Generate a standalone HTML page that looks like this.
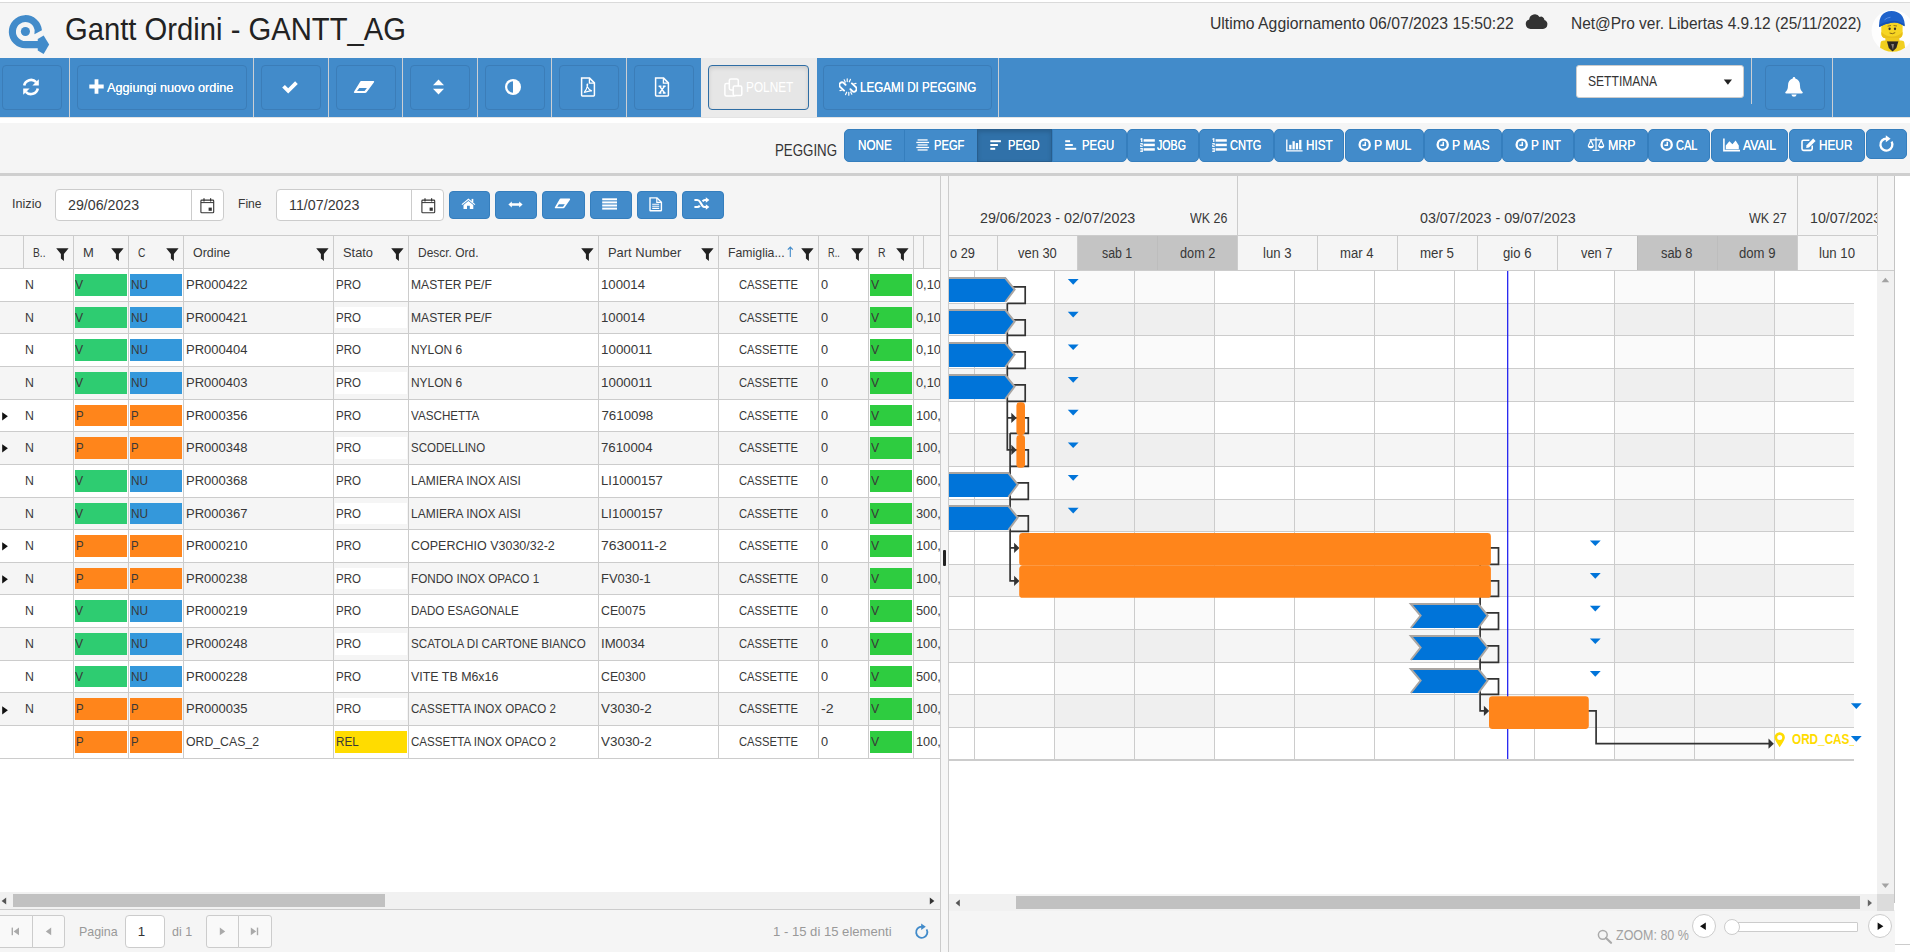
<!DOCTYPE html>
<html><head><meta charset="utf-8"><title>Gantt Ordini - GANTT_AG</title>
<style>
html,body{margin:0;padding:0;}
body{width:1910px;height:952px;overflow:hidden;background:#f5f5f5;font-family:"Liberation Sans",sans-serif;position:relative;}
.r{position:absolute;box-sizing:border-box;}
.t{position:absolute;white-space:nowrap;line-height:1;transform-origin:0 0;display:block;}
</style></head><body>
<div class="r" style="left:0px;top:0px;width:1910px;height:58px;background:#f5f5f5;"></div>
<div class="r" style="left:0px;top:0px;width:1910px;height:2px;background:#fff;"></div>
<div class="r" style="left:0px;top:2px;width:1910px;height:1px;background:#dadada;"></div>
<svg class="r" style="left:6px;top:12px;" width="48" height="46" viewBox="0 0 48 46">
<path d="M35.95 18.28 A16.6 16.6 0 1 0 19.4 36.3 L33 36.3 L33 29.1 L19.4 29.02 A9.44 9.44 0 1 1 28.44 22.29 Z" fill="#428bca"/>
<circle cx="19.4" cy="19.55" r="4.55" fill="#428bca"/>
<path d="M31.77 27.07 L37.63 23.49 L43.16 32.6 L37.63 42.05 L31.77 38.47 Z" fill="#428bca"/>
</svg>
<span class="t" style="left:65.00px;top:13.00px;font-size:32px;color:#222;transform:scaleX(0.9132);">Gantt Ordini - GANTT_AG</span>
<span class="t" style="left:1209.50px;top:16.00px;font-size:16.67px;color:#333;transform:scaleX(0.9453);">Ultimo Aggiornamento 06/07/2023 15:50:22</span>
<svg class="r" style="left:1525px;top:12px;" width="24" height="19" viewBox="0 0 24 19"><path d="M5.7 16.9 A4.8 4.8 0 0 1 4.2 7.5 A5.6 5.6 0 0 1 14.6 5.0 A3.3 3.3 0 0 1 19.4 8.0 A4.6 4.6 0 0 1 18 16.9 Z" fill="#333"/></svg>
<span class="t" style="left:1571.20px;top:16.00px;font-size:16.67px;color:#333;transform:scaleX(0.9283);">Net@Pro ver. Libertas 4.9.12 (25/11/2022)</span>
<svg class="r" style="left:1870px;top:8px;" width="40" height="46" viewBox="0 0 40 46">
<defs><clipPath id="avc"><circle cx="22.6" cy="22.8" r="21"/></clipPath></defs>
<circle cx="22.6" cy="22.8" r="21" fill="#fefefe"/>
<g clip-path="url(#avc)">
<path d="M9.6 44 L10.6 35 Q11 32.6 14 32.6 L31 32.6 Q34 32.6 34.4 35 L35.6 44 Z" fill="#f1cf1f"/>
<path d="M16.7 32.6 L28.6 32.6 L26.4 40 L22.6 43.6 L18.8 40 Z" fill="#2a2622"/>
<path d="M21.2 36 L24 36 L23 42 Z" fill="#8a8178"/>
<rect x="15.4" y="28" width="14" height="5.4" fill="#efc91c"/>
<rect x="11.3" y="13" width="21.3" height="17.2" rx="4.2" fill="#f6d523"/>
<path d="M11.3 24 Q11.3 30.2 15.5 30.2 L28.4 30.2 Q32.6 30.2 32.6 24 Q28 28.6 22 28.6 Q16 28.6 11.3 24 Z" fill="#e9c019"/>
<ellipse cx="19.6" cy="20.8" rx="1.15" ry="1.4" fill="#3b3330"/><ellipse cx="25" cy="20.8" rx="1.15" ry="1.4" fill="#3b3330"/>
<path d="M17.6 18.2 L21 17.5 M23.6 17.5 L27 18" stroke="#6b4a1a" stroke-width="0.7" fill="none"/>
<path d="M19.6 25 Q22.4 26.6 25.2 24.6" stroke="#7a5a14" stroke-width="0.9" fill="none"/>
<path d="M9.2 18.9 Q8.2 3.6 21.6 3.1 Q33.2 3.4 34.7 15.8 L34.5 18.3 Q28.5 13.6 21.6 14.7 Q15 15.8 9.2 18.9 Z" fill="#1f63cb"/>
<path d="M9.2 18.9 Q15 15.8 21.6 14.7 Q28.5 13.6 34.5 18.3 L34.6 16.6 Q28 11.8 21 13 Q14 14.2 9.1 16.8 Z" fill="#1852b4"/>
<path d="M14.5 11.8 Q17 9.6 20.5 9.2" stroke="#5b93e6" stroke-width="0.9" fill="none"/>
</g>
</svg>
<div class="r" style="left:0px;top:58px;width:1910px;height:59px;background:#428bca;"></div>
<div class="r" style="left:0px;top:117px;width:1910px;height:6px;background:#fff;"></div>
<div class="r" style="left:0px;top:117px;width:1910px;height:1px;background:#e4e4e4;"></div>
<div class="r" style="left:69px;top:58px;width:1px;height:59px;background:#cbcfd4;"></div>
<div class="r" style="left:253px;top:58px;width:1px;height:59px;background:#cbcfd4;"></div>
<div class="r" style="left:328px;top:58px;width:1px;height:59px;background:#cbcfd4;"></div>
<div class="r" style="left:402px;top:58px;width:1px;height:59px;background:#cbcfd4;"></div>
<div class="r" style="left:477px;top:58px;width:1px;height:59px;background:#cbcfd4;"></div>
<div class="r" style="left:551px;top:58px;width:1px;height:59px;background:#cbcfd4;"></div>
<div class="r" style="left:626px;top:58px;width:1px;height:59px;background:#cbcfd4;"></div>
<div class="r" style="left:998px;top:58px;width:1px;height:59px;background:#cbcfd4;"></div>
<div class="r" style="left:1832px;top:58px;width:1px;height:59px;background:#cbcfd4;"></div>
<div class="r" style="left:1751px;top:58px;width:1px;height:46px;background:#cbcfd4;"></div>
<div class="r" style="left:2px;top:65px;width:60px;height:45px;border:1px solid #3b7db8;border-radius:4px;"></div>
<div class="r" style="left:261px;top:65px;width:60px;height:45px;border:1px solid #3b7db8;border-radius:4px;"></div>
<div class="r" style="left:335.5px;top:65px;width:60px;height:45px;border:1px solid #3b7db8;border-radius:4px;"></div>
<div class="r" style="left:410px;top:65px;width:60px;height:45px;border:1px solid #3b7db8;border-radius:4px;"></div>
<div class="r" style="left:484.5px;top:65px;width:60px;height:45px;border:1px solid #3b7db8;border-radius:4px;"></div>
<div class="r" style="left:559px;top:65px;width:60px;height:45px;border:1px solid #3b7db8;border-radius:4px;"></div>
<div class="r" style="left:633.5px;top:65px;width:60px;height:45px;border:1px solid #3b7db8;border-radius:4px;"></div>
<div class="r" style="left:76.5px;top:65px;width:170px;height:45px;border:1px solid #3b7db8;border-radius:4px;"></div>
<div class="r" style="left:823px;top:65px;width:169px;height:45px;border:1px solid #3b7db8;border-radius:4px;"></div>
<div class="r" style="left:1765px;top:65px;width:59.5px;height:45px;border:1px solid #3b7db8;border-radius:4px;"></div>
<div class="r" style="left:701px;top:58px;width:116px;height:59px;background:#ebebeb;"></div>
<div class="r" style="left:708px;top:65px;width:100.5px;height:45px;background:#e6e6e6;border:1px solid #2e6da4;border-radius:4px;box-shadow:inset 0 2px 4px rgba(0,0,0,.12);"></div>
<svg class="r" style="left:21px;top:77px;" width="20" height="20" viewBox="0 0 20 20">
<g fill="none" stroke="#fff" stroke-width="2.6">
<path d="M3.2 8.6 A7 7 0 0 1 15.2 5.2"/>
<path d="M16.8 11.4 A7 7 0 0 1 4.8 14.8"/>
</g>
<path d="M17.8 2.2 L17.8 8.6 L11.4 8.6 Z" fill="#fff"/>
<path d="M2.2 17.8 L2.2 11.4 L8.6 11.4 Z" fill="#fff"/>
</svg>
<svg class="r" style="left:89px;top:79px;" width="15" height="15" viewBox="0 0 15 15"><path d="M5.6 0.3 H9.4 V5.6 H14.7 V9.4 H9.4 V14.7 H5.6 V9.4 H0.3 V5.6 H5.6 Z" fill="#fff"/></svg>
<span class="t" style="left:107.00px;top:81.00px;font-size:13.6px;color:#fff;transform:scaleX(0.9338);text-shadow:0 0 0.6px #fff;">Aggiungi nuovo ordine</span>
<svg class="r" style="left:281px;top:79px;" width="18" height="16" viewBox="0 0 18 16"><path d="M1.2 8.6 L3.9 5.9 L7.2 9.2 L14.1 2.3 L16.8 5.0 L7.2 14.6 Z" fill="#fff"/></svg>
<svg class="r" style="left:353px;top:80px;" width="22" height="14" viewBox="0 0 22 14"><path d="M8.2 1 L20.6 1 Q21.6 1.2 21 2.2 L13.6 12.2 Q13.1 13 12 13 L1.6 13 Q0.4 12.8 1 11.8 L7 2 Q7.5 1 8.2 1 Z M6.3 7.9 L4 11.1 L11.6 11.1 L13.9 7.9 Z" fill="#fff" fill-rule="evenodd"/></svg>
<svg class="r" style="left:432px;top:79px;" width="13" height="16" viewBox="0 0 13 16"><path d="M6.5 0.6 L12 6.3 L1 6.3 Z M6.5 15.4 L12 9.7 L1 9.7 Z" fill="#fff"/></svg>
<svg class="r" style="left:504px;top:78px;" width="18" height="18" viewBox="0 0 18 18"><circle cx="9" cy="9" r="8" fill="#fff"/><path d="M9 3.2 A5.8 5.8 0 0 0 9 14.8 Z" fill="#428bca"/></svg>
<svg class="r" style="left:580px;top:77px;" width="16" height="20" viewBox="0 0 16 20"><path d="M1.6 1.1 H9.6 L14.4 5.9 V18.2 Q14.4 18.9 13.7 18.9 H2.3 Q1.6 18.9 1.6 18.2 Z" fill="none" stroke="#fff" stroke-width="1.5"/>
<path d="M9.4 1.3 V6.1 H14.2" fill="none" stroke="#fff" stroke-width="1.3"/>
<path d="M4 15.6 Q6.6 13.2 7.6 8.2 Q7.9 6.8 7.2 7 Q6.5 7.4 7.4 9.8 Q8.6 12.8 12 14 Q10 13.3 4 15.6" fill="none" stroke="#fff" stroke-width="1.1"/></svg>
<svg class="r" style="left:654px;top:77px;" width="16" height="20" viewBox="0 0 16 20"><path d="M1.6 1.1 H9.6 L14.4 5.9 V18.2 Q14.4 18.9 13.7 18.9 H2.3 Q1.6 18.9 1.6 18.2 Z" fill="none" stroke="#fff" stroke-width="1.5"/>
<path d="M9.4 1.3 V6.1 H14.2" fill="none" stroke="#fff" stroke-width="1.3"/>
<path d="M4.6 9.2 H7.4 M8.8 9.2 H11.6 M4.6 16 H7.4 M8.8 16 H11.6 M5.6 9.2 L10.6 16 M10.6 9.2 L5.6 16" stroke="#fff" stroke-width="1.4" fill="none"/></svg>
<svg class="r" style="left:724px;top:78px;" width="19" height="19" viewBox="0 0 19 19"><rect x="5.3" y="0.9" width="9" height="11" rx="1.6" fill="none" stroke="#fff" stroke-width="1.5"/>
<path d="M5 5.6 H2.4 Q0.9 5.6 0.9 7.1 V16.4 Q0.9 17.9 2.4 17.9 H10.2 Q11.7 17.9 11.7 16.4 V12.2" fill="none" stroke="#fff" stroke-width="1.5"/>
<rect x="9.2" y="8" width="8.6" height="9.6" rx="1.4" fill="#e6e6e6" stroke="#fff" stroke-width="1.5"/></svg>
<span class="t" style="left:746.00px;top:80.00px;font-size:14.5px;color:#fff;transform:scaleX(0.8153);">POLNET</span>
<svg class="r" style="left:839px;top:78px;" width="18" height="18" viewBox="0 0 18 18"><g fill="none" stroke="#fff" stroke-width="1.9" stroke-linecap="round">
<path d="M6.6 6.8 L4.6 4.8 A2.7 2.7 0 0 0 0.9 8.6 L5.1 12.6"/>
<path d="M11.4 11.2 L13.4 13.2 A2.7 2.7 0 0 0 17.1 9.4 L12.9 5.4"/>
</g>
<g stroke="#fff" stroke-width="1.2" stroke-linecap="round">
<path d="M8.2 0.8 V3.6 M5.2 1.8 L6.3 4 M11.4 1.4 L10.3 3.8 M9.8 17.2 V14.4 M12.8 16.2 L11.7 14 M6.6 16.6 L7.7 14.2 M1 12.6 L3.2 12 M17 5.4 L14.8 6"/></g></svg>
<span class="t" style="left:859.50px;top:80.00px;font-size:14.5px;color:#fff;transform:scaleX(0.8019);text-shadow:0 0 0.5px #fff;">LEGAMI DI PEGGING</span>
<div class="r" style="left:1576px;top:65px;width:168px;height:33px;background:#fff;border:1px solid #ccc;border-radius:3px;"></div>
<span class="t" style="left:1587.80px;top:74.00px;font-size:14.4px;color:#333;transform:scaleX(0.8397);">SETTIMANA</span>
<svg class="r" style="left:1723px;top:79px;" width="10" height="7" viewBox="0 0 10 7"><path d="M0.8 0.4 H9 L4.9 5.8 Z" fill="#222"/></svg>
<svg class="r" style="left:1784px;top:76px;" width="20" height="22" viewBox="0 0 20 22"><path d="M10 1 Q11.3 1 11.3 2.4 Q16 3.6 16 9.6 Q16 14.2 18.8 16.2 Q18.8 17.4 17.6 17.4 H2.4 Q1.2 17.4 1.2 16.2 Q4 14.2 4 9.6 Q4 3.6 8.7 2.4 Q8.7 1 10 1 Z" fill="#fff"/>
<path d="M7.4 18.4 H12.6 Q12.2 20.8 10 20.8 Q7.8 20.8 7.4 18.4 Z" fill="#fff"/></svg>
<span class="t" style="left:774.60px;top:142.00px;font-size:16.5px;color:#333;transform:scaleX(0.8051);">PEGGING</span>
<div class="r" style="left:844px;top:129px;width:283px;height:33px;background:#428bca;border:1px solid #357ebd;border-radius:5px;"></div>
<div class="r" style="left:904px;top:129px;width:1px;height:33px;background:#357ebd;"></div>
<div class="r" style="left:1051.5px;top:129px;width:1px;height:33px;background:#357ebd;"></div>
<div class="r" style="left:977px;top:129px;width:75px;height:33px;background:#3071a9;border:1px solid #285e8e;box-shadow:inset 0 2px 4px rgba(0,0,0,.15);"></div>
<div class="r" style="left:1127px;top:129px;width:72px;height:33px;background:#428bca;border:1px solid #357ebd;border-radius:5px;"></div>
<div class="r" style="left:1199px;top:129px;width:75px;height:33px;background:#428bca;border:1px solid #357ebd;border-radius:5px;"></div>
<div class="r" style="left:1274px;top:129px;width:70px;height:33px;background:#428bca;border:1px solid #357ebd;border-radius:5px;"></div>
<div class="r" style="left:1345px;top:129px;width:79px;height:33px;background:#428bca;border:1px solid #357ebd;border-radius:5px;"></div>
<div class="r" style="left:1424px;top:129px;width:78px;height:33px;background:#428bca;border:1px solid #357ebd;border-radius:5px;"></div>
<div class="r" style="left:1502px;top:129px;width:72px;height:33px;background:#428bca;border:1px solid #357ebd;border-radius:5px;"></div>
<div class="r" style="left:1574px;top:129px;width:74px;height:33px;background:#428bca;border:1px solid #357ebd;border-radius:5px;"></div>
<div class="r" style="left:1648px;top:129px;width:62px;height:33px;background:#428bca;border:1px solid #357ebd;border-radius:5px;"></div>
<div class="r" style="left:1711px;top:129px;width:77px;height:33px;background:#428bca;border:1px solid #357ebd;border-radius:5px;"></div>
<div class="r" style="left:1789px;top:129px;width:76px;height:33px;background:#428bca;border:1px solid #357ebd;border-radius:5px;"></div>
<div class="r" style="left:1866px;top:129px;width:41px;height:30px;background:#428bca;border:1px solid #357ebd;border-radius:5px;"></div>
<span class="t" style="left:857.50px;top:138.00px;font-size:14.5px;color:#fff;transform:scaleX(0.8044);text-shadow:0 0 0.5px #fff;">NONE</span>
<span class="t" style="left:934.40px;top:138.00px;font-size:14.5px;color:#fff;transform:scaleX(0.7700);text-shadow:0 0 0.5px #fff;">PEGF</span>
<span class="t" style="left:1007.50px;top:138.00px;font-size:14.5px;color:#fff;transform:scaleX(0.7665);text-shadow:0 0 0.5px #fff;">PEGD</span>
<span class="t" style="left:1081.70px;top:138.00px;font-size:14.5px;color:#fff;transform:scaleX(0.7836);text-shadow:0 0 0.5px #fff;">PEGU</span>
<span class="t" style="left:1157.10px;top:138.00px;font-size:14.5px;color:#fff;transform:scaleX(0.7320);text-shadow:0 0 0.5px #fff;">JOBG</span>
<span class="t" style="left:1229.50px;top:138.00px;font-size:14.5px;color:#fff;transform:scaleX(0.7644);text-shadow:0 0 0.5px #fff;">CNTG</span>
<span class="t" style="left:1305.60px;top:138.00px;font-size:14.5px;color:#fff;transform:scaleX(0.8053);text-shadow:0 0 0.5px #fff;">HIST</span>
<span class="t" style="left:1373.50px;top:138.00px;font-size:14.5px;color:#fff;transform:scaleX(0.8444);text-shadow:0 0 0.5px #fff;">P MUL</span>
<span class="t" style="left:1451.90px;top:138.00px;font-size:14.5px;color:#fff;transform:scaleX(0.8404);text-shadow:0 0 0.5px #fff;">P MAS</span>
<span class="t" style="left:1530.50px;top:138.00px;font-size:14.5px;color:#fff;transform:scaleX(0.8126);text-shadow:0 0 0.5px #fff;">P INT</span>
<span class="t" style="left:1607.70px;top:138.00px;font-size:14.5px;color:#fff;transform:scaleX(0.8565);text-shadow:0 0 0.5px #fff;">MRP</span>
<span class="t" style="left:1676.30px;top:138.00px;font-size:14.5px;color:#fff;transform:scaleX(0.7586);text-shadow:0 0 0.5px #fff;">CAL</span>
<span class="t" style="left:1742.60px;top:138.00px;font-size:14.5px;color:#fff;transform:scaleX(0.8471);text-shadow:0 0 0.5px #fff;">AVAIL</span>
<span class="t" style="left:1818.80px;top:138.00px;font-size:14.5px;color:#fff;transform:scaleX(0.8129);text-shadow:0 0 0.5px #fff;">HEUR</span>
<svg class="r" style="left:916px;top:138.8px;" width="16" height="14" viewBox="0 0 16 14"><rect x="1.6" y="0.3" width="10" height="1.3" fill="#fff"/><rect x="0.3" y="2.8" width="12.8" height="1.3" fill="#fff"/><rect x="1.6" y="5.3" width="10" height="1.3" fill="#fff"/><rect x="0.3" y="7.8" width="12.8" height="1.3" fill="#fff"/><rect x="1.6" y="10.3" width="10" height="1.3" fill="#fff"/></svg>
<svg class="r" style="left:990px;top:139px;" width="16" height="14" viewBox="0 0 16 14"><rect x="0.3" y="1.2" width="10.6" height="2" fill="#fff"/><rect x="0.3" y="5.0" width="7.6" height="2" fill="#fff"/><rect x="0.3" y="8.8" width="4.9" height="2" fill="#fff"/></svg>
<svg class="r" style="left:1064.5px;top:139px;" width="16" height="14" viewBox="0 0 16 14"><rect x="0.2" y="1.2" width="4.9" height="2" fill="#fff"/><rect x="0.2" y="5.0" width="7.6" height="2" fill="#fff"/><rect x="0.2" y="8.8" width="11" height="2" fill="#fff"/></svg>
<svg class="r" style="left:1139.8px;top:138px;" width="16" height="15" viewBox="0 0 16 15"><g fill="#fff"><rect x="3.6" y="1.2" width="11.2" height="2.5"/><rect x="3.6" y="5.7" width="11.2" height="2.5"/><rect x="3.6" y="10.2" width="11.2" height="2.5"/>
<rect x="1.1" y="0.2" width="1.3" height="3.8"/><rect x="0.3" y="0.6" width="1.4" height="1"/>
<rect x="0.2" y="5.1" width="2.5" height="1"/><rect x="1.6" y="5.7" width="1.1" height="1.6"/><rect x="0.2" y="6.7" width="1.1" height="1.4"/><rect x="0.2" y="7.9" width="2.5" height="1"/>
<rect x="0.2" y="10" width="2.5" height="0.9"/><rect x="1.7" y="10.2" width="1" height="3.7"/><rect x="0.2" y="11.6" width="2.5" height="0.8"/><rect x="0.2" y="13.1" width="2.5" height="0.9"/></g></svg>
<svg class="r" style="left:1211.9px;top:138px;" width="16" height="15" viewBox="0 0 16 15"><g fill="#fff"><rect x="3.6" y="1.2" width="11.2" height="2.5"/><rect x="3.6" y="5.7" width="11.2" height="2.5"/><rect x="3.6" y="10.2" width="11.2" height="2.5"/>
<rect x="1.1" y="0.2" width="1.3" height="3.8"/><rect x="0.3" y="0.6" width="1.4" height="1"/>
<rect x="0.2" y="5.1" width="2.5" height="1"/><rect x="1.6" y="5.7" width="1.1" height="1.6"/><rect x="0.2" y="6.7" width="1.1" height="1.4"/><rect x="0.2" y="7.9" width="2.5" height="1"/>
<rect x="0.2" y="10" width="2.5" height="0.9"/><rect x="1.7" y="10.2" width="1" height="3.7"/><rect x="0.2" y="11.6" width="2.5" height="0.8"/><rect x="0.2" y="13.1" width="2.5" height="0.9"/></g></svg>
<svg class="r" style="left:1286px;top:138.6px;" width="17" height="14" viewBox="0 0 17 14"><path d="M0.8 0.4 V11.8 H16.6" fill="none" stroke="#fff" stroke-width="1.3"/><g fill="#fff"><rect x="3.2" y="5.8" width="2.3" height="4.6"/><rect x="6.5" y="2.2" width="2.3" height="8.2"/><rect x="9.8" y="4" width="2.3" height="6.4"/><rect x="13.1" y="0.9" width="2.3" height="9.5"/></g></svg>
<svg class="r" style="left:1357.5px;top:138.2px;" width="13.4" height="13.4" viewBox="0 0 13.4 13.4"><circle cx="6.7" cy="6.7" r="5.1" fill="none" stroke="#fff" stroke-width="2.3"/><path d="M7.3 3.7 V7.3 H4.4" fill="none" stroke="#fff" stroke-width="1.5"/></svg>
<svg class="r" style="left:1436.2px;top:138.2px;" width="13.4" height="13.4" viewBox="0 0 13.4 13.4"><circle cx="6.7" cy="6.7" r="5.1" fill="none" stroke="#fff" stroke-width="2.3"/><path d="M7.3 3.7 V7.3 H4.4" fill="none" stroke="#fff" stroke-width="1.5"/></svg>
<svg class="r" style="left:1514.6px;top:138.2px;" width="13.4" height="13.4" viewBox="0 0 13.4 13.4"><circle cx="6.7" cy="6.7" r="5.1" fill="none" stroke="#fff" stroke-width="2.3"/><path d="M7.3 3.7 V7.3 H4.4" fill="none" stroke="#fff" stroke-width="1.5"/></svg>
<svg class="r" style="left:1660.3px;top:138.2px;" width="13.4" height="13.4" viewBox="0 0 13.4 13.4"><circle cx="6.7" cy="6.7" r="5.1" fill="none" stroke="#fff" stroke-width="2.3"/><path d="M7.3 3.7 V7.3 H4.4" fill="none" stroke="#fff" stroke-width="1.5"/></svg>
<svg class="r" style="left:1586.5px;top:137.4px;" width="18" height="15" viewBox="0 0 18 15"><g fill="none" stroke="#fff" stroke-width="1.2"><path d="M9 0.6 V12.6 M2.6 2.8 H15.4 M5.6 13.3 H12.4"/>
<path d="M3.8 3.2 L1.2 9 M3.8 3.2 L6.4 9 M14.2 3.2 L11.6 9 M14.2 3.2 L16.8 9"/></g>
<path d="M0.6 9 H7 Q6.6 11.4 3.8 11.4 Q1 11.4 0.6 9 Z M11 9 H17.4 Q17 11.4 14.2 11.4 Q11.4 11.4 11 9 Z" fill="#fff"/></svg>
<svg class="r" style="left:1723px;top:138px;" width="18" height="14" viewBox="0 0 18 14"><path d="M0.9 0.4 V12.6 H17" fill="none" stroke="#fff" stroke-width="1.6"/><path d="M2.8 11.2 V7.6 L6.4 3.2 L9.4 6.2 L12.6 2.6 L15.8 7.4 V11.2 Z" fill="#fff"/></svg>
<svg class="r" style="left:1800.8px;top:137.4px;" width="16" height="15" viewBox="0 0 16 15"><path d="M11.2 8.4 V11.8 Q11.2 13.4 9.6 13.4 H2.6 Q1 13.4 1 11.8 V4.8 Q1 3.2 2.6 3.2 H8.4" fill="none" stroke="#fff" stroke-width="1.6"/>
<path d="M5.6 8.2 L12.2 1.6 L14.6 4 L8 10.6 L5.2 11 Z" fill="#fff"/></svg>
<svg class="r" style="left:1878px;top:135px;" width="17" height="18" viewBox="0 0 17 18"><path d="M13.6 6.6 A6 6 0 1 1 8.6 3.6" fill="none" stroke="#fff" stroke-width="2.3"/><path d="M7.8 0.2 L12.6 3.7 L7.8 7.2 Z" fill="#fff"/></svg>
<div class="r" style="left:0px;top:173px;width:1910px;height:3px;background:#cfcfcf;"></div>
<div class="r" style="left:0px;top:176px;width:941px;height:776px;background:#f5f5f5;"></div>
<div class="r" style="left:940px;top:176px;width:1px;height:776px;background:#cccccc;"></div>
<div class="r" style="left:941px;top:176px;width:7px;height:776px;background:#f6f6f6;"></div>
<div class="r" style="left:943px;top:550px;width:3px;height:16px;background:#222;border-radius:1px;"></div>
<span class="t" style="left:12.00px;top:197.00px;font-size:13.6px;color:#383838;transform:scaleX(0.9291);">Inizio</span>
<div class="r" style="left:55px;top:189px;width:168.5px;height:32px;background:#fff;border:1px solid #ccc;border-radius:4px;"></div>
<div class="r" style="left:191px;top:190px;width:1px;height:30px;background:#ccc;"></div>
<span class="t" style="left:67.90px;top:198.00px;font-size:14px;color:#383838;transform:scaleX(1.0147);">29/06/2023</span>
<span class="t" style="left:238.30px;top:197.00px;font-size:13.6px;color:#383838;transform:scaleX(0.8920);">Fine</span>
<div class="r" style="left:276px;top:189px;width:168px;height:32px;background:#fff;border:1px solid #ccc;border-radius:4px;"></div>
<div class="r" style="left:411px;top:190px;width:1px;height:30px;background:#ccc;"></div>
<span class="t" style="left:289.00px;top:198.00px;font-size:14px;color:#383838;transform:scaleX(1.0198);">11/07/2023</span>
<svg class="r" style="left:200px;top:197.6px;" width="15" height="16" viewBox="0 0 15 16"><rect x="0.9" y="2.1" width="12.8" height="12.6" rx="0.8" fill="#fff" stroke="#333" stroke-width="1.1"/>
<path d="M0.9 4.6 H13.7" stroke="#333" stroke-width="1"/><path d="M4 0.2 V3.4 M10.6 0.2 V3.4" stroke="#333" stroke-width="1.2"/>
<rect x="8.6" y="9.6" width="3.2" height="3.2" fill="#333"/></svg>
<svg class="r" style="left:420.5px;top:197.6px;" width="15" height="16" viewBox="0 0 15 16"><rect x="0.9" y="2.1" width="12.8" height="12.6" rx="0.8" fill="#fff" stroke="#333" stroke-width="1.1"/>
<path d="M0.9 4.6 H13.7" stroke="#333" stroke-width="1"/><path d="M4 0.2 V3.4 M10.6 0.2 V3.4" stroke="#333" stroke-width="1.2"/>
<rect x="8.6" y="9.6" width="3.2" height="3.2" fill="#333"/></svg>
<div class="r" style="left:449px;top:191px;width:41px;height:28px;background:#428bca;border:1px solid #357ebd;border-radius:4px;"></div>
<div class="r" style="left:495px;top:191px;width:42px;height:28px;background:#428bca;border:1px solid #357ebd;border-radius:4px;"></div>
<div class="r" style="left:542px;top:191px;width:43px;height:28px;background:#428bca;border:1px solid #357ebd;border-radius:4px;"></div>
<div class="r" style="left:590px;top:191px;width:42px;height:28px;background:#428bca;border:1px solid #357ebd;border-radius:4px;"></div>
<div class="r" style="left:637px;top:191px;width:40px;height:28px;background:#428bca;border:1px solid #357ebd;border-radius:4px;"></div>
<div class="r" style="left:682px;top:191px;width:42px;height:28px;background:#428bca;border:1px solid #357ebd;border-radius:4px;"></div>
<svg class="r" style="left:461px;top:198px;" width="15" height="12" viewBox="0 0 15 12"><path d="M7.4 0.5 L14.3 6.2 L13.5 7.1 L7.4 2.1 L1.3 7.1 L0.5 6.2 Z" fill="#fff"/><path d="M7.4 3 L12.3 7 V10.9 H8.8 V7.8 H6 V10.9 H2.5 V7 Z" fill="#fff"/><rect x="10.6" y="0.9" width="1.7" height="3.4" fill="#fff"/></svg>
<svg class="r" style="left:507.5px;top:200.5px;" width="16" height="8" viewBox="0 0 16 8"><path d="M0.4 3.5 L3.8 0.5 V2.3 H11.2 V0.5 L14.6 3.5 L11.2 6.5 V4.7 H3.8 V6.5 Z" fill="#fff"/></svg>
<svg class="r" style="left:554px;top:198.2px;" width="17" height="11" viewBox="0 0 17 11"><path d="M6.6 0.6 L15.6 0.6 Q16.5 0.8 16 1.7 L10.6 9.6 Q10.2 10.3 9.4 10.3 L1.4 10.3 Q0.4 10.1 0.9 9.2 L5.6 1.3 Q6 0.6 6.6 0.6 Z M4.9 6.2 L3.2 8.8 L9 8.8 L10.8 6.2 Z" fill="#fff" fill-rule="evenodd"/></svg>
<svg class="r" style="left:602px;top:197.5px;" width="16" height="12" viewBox="0 0 16 12"><rect x="0.2" y="0.3" width="14.8" height="2" fill="#fff"/><rect x="0.2" y="3.4" width="14.8" height="2" fill="#fff"/><rect x="0.2" y="6.5" width="14.8" height="2" fill="#fff"/><rect x="0.2" y="9.6" width="14.8" height="2" fill="#fff"/></svg>
<svg class="r" style="left:648.8px;top:197px;" width="14" height="15" viewBox="0 0 14 15"><path d="M1 0.9 H8 L12.4 5.2 V13.2 Q12.4 13.8 11.8 13.8 H1.6 Q1 13.8 1 13.2 Z" fill="none" stroke="#fff" stroke-width="1.4"/><path d="M7.8 1 V5.4 H12.2" fill="none" stroke="#fff" stroke-width="1.2"/>
<path d="M3.2 7.2 H10.2 M3.2 9.3 H10.2 M3.2 11.4 H10.2" stroke="#fff" stroke-width="1.1"/></svg>
<svg class="r" style="left:693.6px;top:197px;" width="16" height="13" viewBox="0 0 16 13"><g fill="none" stroke="#fff" stroke-width="2.1"><path d="M0.4 3 H3.2 Q5 3 6.1 5 L8.3 8.6 Q9.3 10 11 10 H12.4"/><path d="M0.4 10 H3.2 Q4.9 10 5.8 8.6 M8.6 4.4 Q9.5 3 11 3 H12.4"/></g>
<path d="M11.8 0.2 L15.4 3 L11.8 5.8 Z M11.8 7.2 L15.4 10 L11.8 12.8 Z" fill="#fff"/></svg>
<div class="r" style="left:0px;top:235px;width:940px;height:1px;background:#cccccc;"></div>
<div class="r" style="left:0px;top:268px;width:940px;height:1px;background:#cccccc;"></div>
<div class="r" style="left:23px;top:236px;width:1px;height:32px;background:#cccccc;"></div>
<div class="r" style="left:73px;top:236px;width:1px;height:32px;background:#cccccc;"></div>
<div class="r" style="left:128px;top:236px;width:1px;height:32px;background:#cccccc;"></div>
<div class="r" style="left:183px;top:236px;width:1px;height:32px;background:#cccccc;"></div>
<div class="r" style="left:333px;top:236px;width:1px;height:32px;background:#cccccc;"></div>
<div class="r" style="left:408px;top:236px;width:1px;height:32px;background:#cccccc;"></div>
<div class="r" style="left:598px;top:236px;width:1px;height:32px;background:#cccccc;"></div>
<div class="r" style="left:718px;top:236px;width:1px;height:32px;background:#cccccc;"></div>
<div class="r" style="left:818px;top:236px;width:1px;height:32px;background:#cccccc;"></div>
<div class="r" style="left:868px;top:236px;width:1px;height:32px;background:#cccccc;"></div>
<div class="r" style="left:913px;top:236px;width:1px;height:32px;background:#cccccc;"></div>
<div class="r" style="left:923px;top:236px;width:1px;height:32px;background:#cccccc;"></div>
<span class="t" style="left:32.70px;top:246.00px;font-size:13.33px;color:#383838;transform:scaleX(0.7670);">B..</span>
<svg class="r" style="left:55.8px;top:248px;" width="13" height="13" viewBox="0 0 13 13"><path d="M0.2 0.2 H12.6 L7.9 5.9 V12.9 L4.9 10.5 V5.9 Z" fill="#222"/></svg>
<span class="t" style="left:83.00px;top:246.00px;font-size:13.33px;color:#383838;transform:scaleX(0.9726);">M</span>
<svg class="r" style="left:110.8px;top:248px;" width="13" height="13" viewBox="0 0 13 13"><path d="M0.2 0.2 H12.6 L7.9 5.9 V12.9 L4.9 10.5 V5.9 Z" fill="#222"/></svg>
<span class="t" style="left:137.70px;top:246.00px;font-size:13.33px;color:#383838;transform:scaleX(0.7687);">C</span>
<svg class="r" style="left:165.9px;top:248px;" width="13" height="13" viewBox="0 0 13 13"><path d="M0.2 0.2 H12.6 L7.9 5.9 V12.9 L4.9 10.5 V5.9 Z" fill="#222"/></svg>
<span class="t" style="left:192.80px;top:246.00px;font-size:13.33px;color:#383838;transform:scaleX(0.9297);">Ordine</span>
<svg class="r" style="left:315.7px;top:248px;" width="13" height="13" viewBox="0 0 13 13"><path d="M0.2 0.2 H12.6 L7.9 5.9 V12.9 L4.9 10.5 V5.9 Z" fill="#222"/></svg>
<span class="t" style="left:342.50px;top:246.00px;font-size:13.33px;color:#383838;transform:scaleX(0.9638);">Stato</span>
<svg class="r" style="left:390.8px;top:248px;" width="13" height="13" viewBox="0 0 13 13"><path d="M0.2 0.2 H12.6 L7.9 5.9 V12.9 L4.9 10.5 V5.9 Z" fill="#222"/></svg>
<span class="t" style="left:417.70px;top:246.00px;font-size:13.33px;color:#383838;transform:scaleX(0.8975);">Descr. Ord.</span>
<svg class="r" style="left:580.8px;top:248px;" width="13" height="13" viewBox="0 0 13 13"><path d="M0.2 0.2 H12.6 L7.9 5.9 V12.9 L4.9 10.5 V5.9 Z" fill="#222"/></svg>
<span class="t" style="left:607.60px;top:246.00px;font-size:13.33px;color:#383838;transform:scaleX(0.9700);">Part Number</span>
<svg class="r" style="left:701px;top:248px;" width="13" height="13" viewBox="0 0 13 13"><path d="M0.2 0.2 H12.6 L7.9 5.9 V12.9 L4.9 10.5 V5.9 Z" fill="#222"/></svg>
<span class="t" style="left:727.60px;top:246.00px;font-size:13.33px;color:#383838;transform:scaleX(0.9222);">Famiglia...</span>
<svg class="r" style="left:801px;top:248px;" width="13" height="13" viewBox="0 0 13 13"><path d="M0.2 0.2 H12.6 L7.9 5.9 V12.9 L4.9 10.5 V5.9 Z" fill="#222"/></svg>
<svg class="r" style="left:786.5px;top:245.5px;" width="7" height="12" viewBox="0 0 7 12"><path d="M3.3 1 V11 M0.8 3.6 L3.3 1 L5.8 3.6" fill="none" stroke="#428bca" stroke-width="1.1"/></svg>
<span class="t" style="left:828.00px;top:246.00px;font-size:13.33px;color:#383838;transform:scaleX(0.6928);">R..</span>
<svg class="r" style="left:851px;top:248px;" width="13" height="13" viewBox="0 0 13 13"><path d="M0.2 0.2 H12.6 L7.9 5.9 V12.9 L4.9 10.5 V5.9 Z" fill="#222"/></svg>
<span class="t" style="left:877.80px;top:246.00px;font-size:13.33px;color:#383838;transform:scaleX(0.7895);">R</span>
<svg class="r" style="left:895.5px;top:248px;" width="13" height="13" viewBox="0 0 13 13"><path d="M0.2 0.2 H12.6 L7.9 5.9 V12.9 L4.9 10.5 V5.9 Z" fill="#222"/></svg>
<div class="r" style="left:0px;top:269px;width:940px;height:32px;background:#fff;"></div>
<div class="r" style="left:0px;top:301px;width:940px;height:1px;background:#cccccc;"></div>
<div class="r" style="left:0px;top:302px;width:940px;height:31px;background:#f5f5f5;"></div>
<div class="r" style="left:0px;top:333px;width:940px;height:1px;background:#cccccc;"></div>
<div class="r" style="left:0px;top:334px;width:940px;height:32px;background:#fff;"></div>
<div class="r" style="left:0px;top:366px;width:940px;height:1px;background:#cccccc;"></div>
<div class="r" style="left:0px;top:367px;width:940px;height:32px;background:#f5f5f5;"></div>
<div class="r" style="left:0px;top:399px;width:940px;height:1px;background:#cccccc;"></div>
<div class="r" style="left:0px;top:400px;width:940px;height:31px;background:#fff;"></div>
<div class="r" style="left:0px;top:431px;width:940px;height:1px;background:#cccccc;"></div>
<div class="r" style="left:0px;top:432px;width:940px;height:32px;background:#f5f5f5;"></div>
<div class="r" style="left:0px;top:464px;width:940px;height:1px;background:#cccccc;"></div>
<div class="r" style="left:0px;top:465px;width:940px;height:32px;background:#fff;"></div>
<div class="r" style="left:0px;top:497px;width:940px;height:1px;background:#cccccc;"></div>
<div class="r" style="left:0px;top:498px;width:940px;height:31px;background:#f5f5f5;"></div>
<div class="r" style="left:0px;top:529px;width:940px;height:1px;background:#cccccc;"></div>
<div class="r" style="left:0px;top:530px;width:940px;height:32px;background:#fff;"></div>
<div class="r" style="left:0px;top:562px;width:940px;height:1px;background:#cccccc;"></div>
<div class="r" style="left:0px;top:563px;width:940px;height:31px;background:#f5f5f5;"></div>
<div class="r" style="left:0px;top:594px;width:940px;height:1px;background:#cccccc;"></div>
<div class="r" style="left:0px;top:595px;width:940px;height:32px;background:#fff;"></div>
<div class="r" style="left:0px;top:627px;width:940px;height:1px;background:#cccccc;"></div>
<div class="r" style="left:0px;top:628px;width:940px;height:32px;background:#f5f5f5;"></div>
<div class="r" style="left:0px;top:660px;width:940px;height:1px;background:#cccccc;"></div>
<div class="r" style="left:0px;top:661px;width:940px;height:31px;background:#fff;"></div>
<div class="r" style="left:0px;top:692px;width:940px;height:1px;background:#cccccc;"></div>
<div class="r" style="left:0px;top:693px;width:940px;height:32px;background:#f5f5f5;"></div>
<div class="r" style="left:0px;top:725px;width:940px;height:1px;background:#cccccc;"></div>
<div class="r" style="left:0px;top:726px;width:940px;height:32px;background:#fff;"></div>
<div class="r" style="left:0px;top:758px;width:940px;height:1px;background:#cccccc;"></div>
<div class="r" style="left:73px;top:269px;width:1px;height:489px;background:#cccccc;"></div>
<div class="r" style="left:128px;top:269px;width:1px;height:489px;background:#cccccc;"></div>
<div class="r" style="left:183px;top:269px;width:1px;height:489px;background:#cccccc;"></div>
<div class="r" style="left:333px;top:269px;width:1px;height:489px;background:#cccccc;"></div>
<div class="r" style="left:408px;top:269px;width:1px;height:489px;background:#cccccc;"></div>
<div class="r" style="left:598px;top:269px;width:1px;height:489px;background:#cccccc;"></div>
<div class="r" style="left:718px;top:269px;width:1px;height:489px;background:#cccccc;"></div>
<div class="r" style="left:818px;top:269px;width:1px;height:489px;background:#cccccc;"></div>
<div class="r" style="left:868px;top:269px;width:1px;height:489px;background:#cccccc;"></div>
<div class="r" style="left:913px;top:269px;width:1px;height:489px;background:#cccccc;"></div>
<div class="r" style="left:0;top:269px;width:940px;height:490px;overflow:hidden;">
<span class="t" style="left:24.70px;top:9.00px;font-size:13.33px;color:#383838;transform:scaleX(0.9245);">N</span>
<div class="r" style="left:75px;top:5px;width:52px;height:22px;background:#2ecc71;"></div>
<div class="r" style="left:130px;top:5px;width:52px;height:22px;background:#3498db;"></div>
<span class="t" style="left:75.40px;top:9.00px;font-size:13.33px;color:#383838;transform:scaleX(0.9110);">V</span>
<span class="t" style="left:130.50px;top:9.00px;font-size:13.33px;color:#383838;transform:scaleX(0.8881);">NU</span>
<span class="t" style="left:185.90px;top:9.00px;font-size:13.33px;color:#383838;transform:scaleX(0.9762);">PR000422</span>
<div class="r" style="left:335px;top:5px;width:72px;height:22px;background:#fff;"></div>
<span class="t" style="left:335.90px;top:9.00px;font-size:13.33px;color:#383838;transform:scaleX(0.8655);">PRO</span>
<span class="t" style="left:410.60px;top:9.00px;font-size:13.33px;color:#383838;transform:scaleX(0.9091);">MASTER PE/F</span>
<span class="t" style="left:601.40px;top:9.00px;font-size:13.33px;color:#383838;transform:scaleX(0.9892);">100014</span>
<span class="t" style="left:739.20px;top:9.00px;font-size:13.33px;color:#383838;transform:scaleX(0.8398);">CASSETTE</span>
<span class="t" style="left:820.60px;top:9.00px;font-size:13.33px;color:#383838;transform:scaleX(0.9577);">0</span>
<div class="r" style="left:870px;top:5px;width:42px;height:22px;background:#2ecc40;"></div>
<span class="t" style="left:870.50px;top:9.00px;font-size:13.33px;color:#383838;transform:scaleX(0.9110);">V</span>
<span class="t" style="left:915.60px;top:9.00px;font-size:13.33px;color:#383838;transform:scaleX(0.9600);">0,10</span>
<span class="t" style="left:24.70px;top:42.00px;font-size:13.33px;color:#383838;transform:scaleX(0.9245);">N</span>
<div class="r" style="left:75px;top:38px;width:52px;height:21px;background:#2ecc71;"></div>
<div class="r" style="left:130px;top:38px;width:52px;height:21px;background:#3498db;"></div>
<span class="t" style="left:75.40px;top:42.00px;font-size:13.33px;color:#383838;transform:scaleX(0.9110);">V</span>
<span class="t" style="left:130.50px;top:42.00px;font-size:13.33px;color:#383838;transform:scaleX(0.8881);">NU</span>
<span class="t" style="left:185.90px;top:42.00px;font-size:13.33px;color:#383838;transform:scaleX(0.9762);">PR000421</span>
<div class="r" style="left:335px;top:38px;width:72px;height:21px;background:#fff;"></div>
<span class="t" style="left:335.90px;top:42.00px;font-size:13.33px;color:#383838;transform:scaleX(0.8655);">PRO</span>
<span class="t" style="left:410.60px;top:42.00px;font-size:13.33px;color:#383838;transform:scaleX(0.9091);">MASTER PE/F</span>
<span class="t" style="left:601.40px;top:42.00px;font-size:13.33px;color:#383838;transform:scaleX(0.9892);">100014</span>
<span class="t" style="left:739.20px;top:42.00px;font-size:13.33px;color:#383838;transform:scaleX(0.8398);">CASSETTE</span>
<span class="t" style="left:820.60px;top:42.00px;font-size:13.33px;color:#383838;transform:scaleX(0.9577);">0</span>
<div class="r" style="left:870px;top:38px;width:42px;height:21px;background:#2ecc40;"></div>
<span class="t" style="left:870.50px;top:42.00px;font-size:13.33px;color:#383838;transform:scaleX(0.9110);">V</span>
<span class="t" style="left:915.60px;top:42.00px;font-size:13.33px;color:#383838;transform:scaleX(0.9600);">0,10</span>
<span class="t" style="left:24.70px;top:74.00px;font-size:13.33px;color:#383838;transform:scaleX(0.9245);">N</span>
<div class="r" style="left:75px;top:70px;width:52px;height:22px;background:#2ecc71;"></div>
<div class="r" style="left:130px;top:70px;width:52px;height:22px;background:#3498db;"></div>
<span class="t" style="left:75.40px;top:74.00px;font-size:13.33px;color:#383838;transform:scaleX(0.9110);">V</span>
<span class="t" style="left:130.50px;top:74.00px;font-size:13.33px;color:#383838;transform:scaleX(0.8881);">NU</span>
<span class="t" style="left:185.90px;top:74.00px;font-size:13.33px;color:#383838;transform:scaleX(0.9762);">PR000404</span>
<div class="r" style="left:335px;top:70px;width:72px;height:22px;background:#fff;"></div>
<span class="t" style="left:335.90px;top:74.00px;font-size:13.33px;color:#383838;transform:scaleX(0.8655);">PRO</span>
<span class="t" style="left:410.60px;top:74.00px;font-size:13.33px;color:#383838;transform:scaleX(0.8958);">NYLON 6</span>
<span class="t" style="left:601.40px;top:74.00px;font-size:13.33px;color:#383838;transform:scaleX(1.0038);">1000011</span>
<span class="t" style="left:739.20px;top:74.00px;font-size:13.33px;color:#383838;transform:scaleX(0.8398);">CASSETTE</span>
<span class="t" style="left:820.60px;top:74.00px;font-size:13.33px;color:#383838;transform:scaleX(0.9577);">0</span>
<div class="r" style="left:870px;top:70px;width:42px;height:22px;background:#2ecc40;"></div>
<span class="t" style="left:870.50px;top:74.00px;font-size:13.33px;color:#383838;transform:scaleX(0.9110);">V</span>
<span class="t" style="left:915.60px;top:74.00px;font-size:13.33px;color:#383838;transform:scaleX(0.9600);">0,10</span>
<span class="t" style="left:24.70px;top:107.00px;font-size:13.33px;color:#383838;transform:scaleX(0.9245);">N</span>
<div class="r" style="left:75px;top:103px;width:52px;height:22px;background:#2ecc71;"></div>
<div class="r" style="left:130px;top:103px;width:52px;height:22px;background:#3498db;"></div>
<span class="t" style="left:75.40px;top:107.00px;font-size:13.33px;color:#383838;transform:scaleX(0.9110);">V</span>
<span class="t" style="left:130.50px;top:107.00px;font-size:13.33px;color:#383838;transform:scaleX(0.8881);">NU</span>
<span class="t" style="left:185.90px;top:107.00px;font-size:13.33px;color:#383838;transform:scaleX(0.9762);">PR000403</span>
<div class="r" style="left:335px;top:103px;width:72px;height:22px;background:#fff;"></div>
<span class="t" style="left:335.90px;top:107.00px;font-size:13.33px;color:#383838;transform:scaleX(0.8655);">PRO</span>
<span class="t" style="left:410.60px;top:107.00px;font-size:13.33px;color:#383838;transform:scaleX(0.8958);">NYLON 6</span>
<span class="t" style="left:601.40px;top:107.00px;font-size:13.33px;color:#383838;transform:scaleX(1.0038);">1000011</span>
<span class="t" style="left:739.20px;top:107.00px;font-size:13.33px;color:#383838;transform:scaleX(0.8398);">CASSETTE</span>
<span class="t" style="left:820.60px;top:107.00px;font-size:13.33px;color:#383838;transform:scaleX(0.9577);">0</span>
<div class="r" style="left:870px;top:103px;width:42px;height:22px;background:#2ecc40;"></div>
<span class="t" style="left:870.50px;top:107.00px;font-size:13.33px;color:#383838;transform:scaleX(0.9110);">V</span>
<span class="t" style="left:915.60px;top:107.00px;font-size:13.33px;color:#383838;transform:scaleX(0.9600);">0,10</span>
<svg class="r" style="left:2px;top:143px;" width="7" height="9" viewBox="0 0 7 9"><path d="M0.2 0.2 L5.9 4.3 L0.2 8.4 Z" fill="#111"/></svg>
<span class="t" style="left:24.70px;top:140.00px;font-size:13.33px;color:#383838;transform:scaleX(0.9245);">N</span>
<div class="r" style="left:75px;top:136px;width:52px;height:21px;background:#ff851b;"></div>
<div class="r" style="left:130px;top:136px;width:52px;height:21px;background:#ff851b;"></div>
<span class="t" style="left:76.20px;top:140.00px;font-size:13.33px;color:#383838;transform:scaleX(0.8547);">P</span>
<span class="t" style="left:131.20px;top:140.00px;font-size:13.33px;color:#383838;transform:scaleX(0.8547);">P</span>
<span class="t" style="left:185.90px;top:140.00px;font-size:13.33px;color:#383838;transform:scaleX(0.9762);">PR000356</span>
<div class="r" style="left:335px;top:136px;width:72px;height:21px;background:#fff;"></div>
<span class="t" style="left:335.90px;top:140.00px;font-size:13.33px;color:#383838;transform:scaleX(0.8655);">PRO</span>
<span class="t" style="left:410.60px;top:140.00px;font-size:13.33px;color:#383838;transform:scaleX(0.8754);">VASCHETTA</span>
<span class="t" style="left:601.40px;top:140.00px;font-size:13.33px;color:#383838;">7610098</span>
<span class="t" style="left:739.20px;top:140.00px;font-size:13.33px;color:#383838;transform:scaleX(0.8398);">CASSETTE</span>
<span class="t" style="left:820.60px;top:140.00px;font-size:13.33px;color:#383838;transform:scaleX(0.9577);">0</span>
<div class="r" style="left:870px;top:136px;width:42px;height:21px;background:#2ecc40;"></div>
<span class="t" style="left:870.50px;top:140.00px;font-size:13.33px;color:#383838;transform:scaleX(0.9110);">V</span>
<span class="t" style="left:915.60px;top:140.00px;font-size:13.33px;color:#383838;transform:scaleX(0.9600);">100,</span>
<svg class="r" style="left:2px;top:175px;" width="7" height="9" viewBox="0 0 7 9"><path d="M0.2 0.2 L5.9 4.3 L0.2 8.4 Z" fill="#111"/></svg>
<span class="t" style="left:24.70px;top:172.00px;font-size:13.33px;color:#383838;transform:scaleX(0.9245);">N</span>
<div class="r" style="left:75px;top:168px;width:52px;height:22px;background:#ff851b;"></div>
<div class="r" style="left:130px;top:168px;width:52px;height:22px;background:#ff851b;"></div>
<span class="t" style="left:76.20px;top:172.00px;font-size:13.33px;color:#383838;transform:scaleX(0.8547);">P</span>
<span class="t" style="left:131.20px;top:172.00px;font-size:13.33px;color:#383838;transform:scaleX(0.8547);">P</span>
<span class="t" style="left:185.90px;top:172.00px;font-size:13.33px;color:#383838;transform:scaleX(0.9762);">PR000348</span>
<div class="r" style="left:335px;top:168px;width:72px;height:22px;background:#fff;"></div>
<span class="t" style="left:335.90px;top:172.00px;font-size:13.33px;color:#383838;transform:scaleX(0.8655);">PRO</span>
<span class="t" style="left:410.60px;top:172.00px;font-size:13.33px;color:#383838;transform:scaleX(0.8623);">SCODELLINO</span>
<span class="t" style="left:601.40px;top:172.00px;font-size:13.33px;color:#383838;transform:scaleX(0.9943);">7610004</span>
<span class="t" style="left:739.20px;top:172.00px;font-size:13.33px;color:#383838;transform:scaleX(0.8398);">CASSETTE</span>
<span class="t" style="left:820.60px;top:172.00px;font-size:13.33px;color:#383838;transform:scaleX(0.9577);">0</span>
<div class="r" style="left:870px;top:168px;width:42px;height:22px;background:#2ecc40;"></div>
<span class="t" style="left:870.50px;top:172.00px;font-size:13.33px;color:#383838;transform:scaleX(0.9110);">V</span>
<span class="t" style="left:915.60px;top:172.00px;font-size:13.33px;color:#383838;transform:scaleX(0.9600);">100,</span>
<span class="t" style="left:24.70px;top:205.00px;font-size:13.33px;color:#383838;transform:scaleX(0.9245);">N</span>
<div class="r" style="left:75px;top:201px;width:52px;height:22px;background:#2ecc71;"></div>
<div class="r" style="left:130px;top:201px;width:52px;height:22px;background:#3498db;"></div>
<span class="t" style="left:75.40px;top:205.00px;font-size:13.33px;color:#383838;transform:scaleX(0.9110);">V</span>
<span class="t" style="left:130.50px;top:205.00px;font-size:13.33px;color:#383838;transform:scaleX(0.8881);">NU</span>
<span class="t" style="left:185.90px;top:205.00px;font-size:13.33px;color:#383838;transform:scaleX(0.9762);">PR000368</span>
<div class="r" style="left:335px;top:201px;width:72px;height:22px;background:#fff;"></div>
<span class="t" style="left:335.90px;top:205.00px;font-size:13.33px;color:#383838;transform:scaleX(0.8655);">PRO</span>
<span class="t" style="left:410.60px;top:205.00px;font-size:13.33px;color:#383838;transform:scaleX(0.8991);">LAMIERA INOX AISI</span>
<span class="t" style="left:601.40px;top:205.00px;font-size:13.33px;color:#383838;transform:scaleX(0.9792);">LI1000157</span>
<span class="t" style="left:739.20px;top:205.00px;font-size:13.33px;color:#383838;transform:scaleX(0.8398);">CASSETTE</span>
<span class="t" style="left:820.60px;top:205.00px;font-size:13.33px;color:#383838;transform:scaleX(0.9577);">0</span>
<div class="r" style="left:870px;top:201px;width:42px;height:22px;background:#2ecc40;"></div>
<span class="t" style="left:870.50px;top:205.00px;font-size:13.33px;color:#383838;transform:scaleX(0.9110);">V</span>
<span class="t" style="left:915.60px;top:205.00px;font-size:13.33px;color:#383838;transform:scaleX(0.9600);">600,</span>
<span class="t" style="left:24.70px;top:238.00px;font-size:13.33px;color:#383838;transform:scaleX(0.9245);">N</span>
<div class="r" style="left:75px;top:234px;width:52px;height:21px;background:#2ecc71;"></div>
<div class="r" style="left:130px;top:234px;width:52px;height:21px;background:#3498db;"></div>
<span class="t" style="left:75.40px;top:238.00px;font-size:13.33px;color:#383838;transform:scaleX(0.9110);">V</span>
<span class="t" style="left:130.50px;top:238.00px;font-size:13.33px;color:#383838;transform:scaleX(0.8881);">NU</span>
<span class="t" style="left:185.90px;top:238.00px;font-size:13.33px;color:#383838;transform:scaleX(0.9762);">PR000367</span>
<div class="r" style="left:335px;top:234px;width:72px;height:21px;background:#fff;"></div>
<span class="t" style="left:335.90px;top:238.00px;font-size:13.33px;color:#383838;transform:scaleX(0.8655);">PRO</span>
<span class="t" style="left:410.60px;top:238.00px;font-size:13.33px;color:#383838;transform:scaleX(0.8991);">LAMIERA INOX AISI</span>
<span class="t" style="left:601.40px;top:238.00px;font-size:13.33px;color:#383838;transform:scaleX(0.9792);">LI1000157</span>
<span class="t" style="left:739.20px;top:238.00px;font-size:13.33px;color:#383838;transform:scaleX(0.8398);">CASSETTE</span>
<span class="t" style="left:820.60px;top:238.00px;font-size:13.33px;color:#383838;transform:scaleX(0.9577);">0</span>
<div class="r" style="left:870px;top:234px;width:42px;height:21px;background:#2ecc40;"></div>
<span class="t" style="left:870.50px;top:238.00px;font-size:13.33px;color:#383838;transform:scaleX(0.9110);">V</span>
<span class="t" style="left:915.60px;top:238.00px;font-size:13.33px;color:#383838;transform:scaleX(0.9600);">300,</span>
<svg class="r" style="left:2px;top:273px;" width="7" height="9" viewBox="0 0 7 9"><path d="M0.2 0.2 L5.9 4.3 L0.2 8.4 Z" fill="#111"/></svg>
<span class="t" style="left:24.70px;top:270.00px;font-size:13.33px;color:#383838;transform:scaleX(0.9245);">N</span>
<div class="r" style="left:75px;top:266px;width:52px;height:22px;background:#ff851b;"></div>
<div class="r" style="left:130px;top:266px;width:52px;height:22px;background:#ff851b;"></div>
<span class="t" style="left:76.20px;top:270.00px;font-size:13.33px;color:#383838;transform:scaleX(0.8547);">P</span>
<span class="t" style="left:131.20px;top:270.00px;font-size:13.33px;color:#383838;transform:scaleX(0.8547);">P</span>
<span class="t" style="left:185.90px;top:270.00px;font-size:13.33px;color:#383838;transform:scaleX(0.9762);">PR000210</span>
<div class="r" style="left:335px;top:266px;width:72px;height:22px;background:#fff;"></div>
<span class="t" style="left:335.90px;top:270.00px;font-size:13.33px;color:#383838;transform:scaleX(0.8655);">PRO</span>
<span class="t" style="left:410.60px;top:270.00px;font-size:13.33px;color:#383838;transform:scaleX(0.9376);">COPERCHIO V3030/32-2</span>
<span class="t" style="left:601.40px;top:270.00px;font-size:13.33px;color:#383838;transform:scaleX(1.0468);">7630011-2</span>
<span class="t" style="left:739.20px;top:270.00px;font-size:13.33px;color:#383838;transform:scaleX(0.8398);">CASSETTE</span>
<span class="t" style="left:820.60px;top:270.00px;font-size:13.33px;color:#383838;transform:scaleX(0.9577);">0</span>
<div class="r" style="left:870px;top:266px;width:42px;height:22px;background:#2ecc40;"></div>
<span class="t" style="left:870.50px;top:270.00px;font-size:13.33px;color:#383838;transform:scaleX(0.9110);">V</span>
<span class="t" style="left:915.60px;top:270.00px;font-size:13.33px;color:#383838;transform:scaleX(0.9600);">100,</span>
<svg class="r" style="left:2px;top:306px;" width="7" height="9" viewBox="0 0 7 9"><path d="M0.2 0.2 L5.9 4.3 L0.2 8.4 Z" fill="#111"/></svg>
<span class="t" style="left:24.70px;top:303.00px;font-size:13.33px;color:#383838;transform:scaleX(0.9245);">N</span>
<div class="r" style="left:75px;top:299px;width:52px;height:21px;background:#ff851b;"></div>
<div class="r" style="left:130px;top:299px;width:52px;height:21px;background:#ff851b;"></div>
<span class="t" style="left:76.20px;top:303.00px;font-size:13.33px;color:#383838;transform:scaleX(0.8547);">P</span>
<span class="t" style="left:131.20px;top:303.00px;font-size:13.33px;color:#383838;transform:scaleX(0.8547);">P</span>
<span class="t" style="left:185.90px;top:303.00px;font-size:13.33px;color:#383838;transform:scaleX(0.9762);">PR000238</span>
<div class="r" style="left:335px;top:299px;width:72px;height:21px;background:#fff;"></div>
<span class="t" style="left:335.90px;top:303.00px;font-size:13.33px;color:#383838;transform:scaleX(0.8655);">PRO</span>
<span class="t" style="left:410.60px;top:303.00px;font-size:13.33px;color:#383838;transform:scaleX(0.8757);">FONDO INOX OPACO 1</span>
<span class="t" style="left:601.40px;top:303.00px;font-size:13.33px;color:#383838;transform:scaleX(0.9721);">FV030-1</span>
<span class="t" style="left:739.20px;top:303.00px;font-size:13.33px;color:#383838;transform:scaleX(0.8398);">CASSETTE</span>
<span class="t" style="left:820.60px;top:303.00px;font-size:13.33px;color:#383838;transform:scaleX(0.9577);">0</span>
<div class="r" style="left:870px;top:299px;width:42px;height:21px;background:#2ecc40;"></div>
<span class="t" style="left:870.50px;top:303.00px;font-size:13.33px;color:#383838;transform:scaleX(0.9110);">V</span>
<span class="t" style="left:915.60px;top:303.00px;font-size:13.33px;color:#383838;transform:scaleX(0.9600);">100,</span>
<span class="t" style="left:24.70px;top:335.00px;font-size:13.33px;color:#383838;transform:scaleX(0.9245);">N</span>
<div class="r" style="left:75px;top:331px;width:52px;height:22px;background:#2ecc71;"></div>
<div class="r" style="left:130px;top:331px;width:52px;height:22px;background:#3498db;"></div>
<span class="t" style="left:75.40px;top:335.00px;font-size:13.33px;color:#383838;transform:scaleX(0.9110);">V</span>
<span class="t" style="left:130.50px;top:335.00px;font-size:13.33px;color:#383838;transform:scaleX(0.8881);">NU</span>
<span class="t" style="left:185.90px;top:335.00px;font-size:13.33px;color:#383838;transform:scaleX(0.9762);">PR000219</span>
<div class="r" style="left:335px;top:331px;width:72px;height:22px;background:#fff;"></div>
<span class="t" style="left:335.90px;top:335.00px;font-size:13.33px;color:#383838;transform:scaleX(0.8655);">PRO</span>
<span class="t" style="left:410.60px;top:335.00px;font-size:13.33px;color:#383838;transform:scaleX(0.8662);">DADO ESAGONALE</span>
<span class="t" style="left:601.40px;top:335.00px;font-size:13.33px;color:#383838;transform:scaleX(0.9237);">CE0075</span>
<span class="t" style="left:739.20px;top:335.00px;font-size:13.33px;color:#383838;transform:scaleX(0.8398);">CASSETTE</span>
<span class="t" style="left:820.60px;top:335.00px;font-size:13.33px;color:#383838;transform:scaleX(0.9577);">0</span>
<div class="r" style="left:870px;top:331px;width:42px;height:22px;background:#2ecc40;"></div>
<span class="t" style="left:870.50px;top:335.00px;font-size:13.33px;color:#383838;transform:scaleX(0.9110);">V</span>
<span class="t" style="left:915.60px;top:335.00px;font-size:13.33px;color:#383838;transform:scaleX(0.9600);">500,</span>
<span class="t" style="left:24.70px;top:368.00px;font-size:13.33px;color:#383838;transform:scaleX(0.9245);">N</span>
<div class="r" style="left:75px;top:364px;width:52px;height:22px;background:#2ecc71;"></div>
<div class="r" style="left:130px;top:364px;width:52px;height:22px;background:#3498db;"></div>
<span class="t" style="left:75.40px;top:368.00px;font-size:13.33px;color:#383838;transform:scaleX(0.9110);">V</span>
<span class="t" style="left:130.50px;top:368.00px;font-size:13.33px;color:#383838;transform:scaleX(0.8881);">NU</span>
<span class="t" style="left:185.90px;top:368.00px;font-size:13.33px;color:#383838;transform:scaleX(0.9762);">PR000248</span>
<div class="r" style="left:335px;top:364px;width:72px;height:22px;background:#fff;"></div>
<span class="t" style="left:335.90px;top:368.00px;font-size:13.33px;color:#383838;transform:scaleX(0.8655);">PRO</span>
<span class="t" style="left:410.60px;top:368.00px;font-size:13.33px;color:#383838;transform:scaleX(0.8718);">SCATOLA DI CARTONE BIANCO</span>
<span class="t" style="left:601.40px;top:368.00px;font-size:13.33px;color:#383838;transform:scaleX(0.9873);">IM0034</span>
<span class="t" style="left:739.20px;top:368.00px;font-size:13.33px;color:#383838;transform:scaleX(0.8398);">CASSETTE</span>
<span class="t" style="left:820.60px;top:368.00px;font-size:13.33px;color:#383838;transform:scaleX(0.9577);">0</span>
<div class="r" style="left:870px;top:364px;width:42px;height:22px;background:#2ecc40;"></div>
<span class="t" style="left:870.50px;top:368.00px;font-size:13.33px;color:#383838;transform:scaleX(0.9110);">V</span>
<span class="t" style="left:915.60px;top:368.00px;font-size:13.33px;color:#383838;transform:scaleX(0.9600);">100,</span>
<span class="t" style="left:24.70px;top:401.00px;font-size:13.33px;color:#383838;transform:scaleX(0.9245);">N</span>
<div class="r" style="left:75px;top:397px;width:52px;height:21px;background:#2ecc71;"></div>
<div class="r" style="left:130px;top:397px;width:52px;height:21px;background:#3498db;"></div>
<span class="t" style="left:75.40px;top:401.00px;font-size:13.33px;color:#383838;transform:scaleX(0.9110);">V</span>
<span class="t" style="left:130.50px;top:401.00px;font-size:13.33px;color:#383838;transform:scaleX(0.8881);">NU</span>
<span class="t" style="left:185.90px;top:401.00px;font-size:13.33px;color:#383838;transform:scaleX(0.9762);">PR000228</span>
<div class="r" style="left:335px;top:397px;width:72px;height:21px;background:#fff;"></div>
<span class="t" style="left:335.90px;top:401.00px;font-size:13.33px;color:#383838;transform:scaleX(0.8655);">PRO</span>
<span class="t" style="left:410.60px;top:401.00px;font-size:13.33px;color:#383838;transform:scaleX(0.9314);">VITE TB M6x16</span>
<span class="t" style="left:601.40px;top:401.00px;font-size:13.33px;color:#383838;transform:scaleX(0.9237);">CE0300</span>
<span class="t" style="left:739.20px;top:401.00px;font-size:13.33px;color:#383838;transform:scaleX(0.8398);">CASSETTE</span>
<span class="t" style="left:820.60px;top:401.00px;font-size:13.33px;color:#383838;transform:scaleX(0.9577);">0</span>
<div class="r" style="left:870px;top:397px;width:42px;height:21px;background:#2ecc40;"></div>
<span class="t" style="left:870.50px;top:401.00px;font-size:13.33px;color:#383838;transform:scaleX(0.9110);">V</span>
<span class="t" style="left:915.60px;top:401.00px;font-size:13.33px;color:#383838;transform:scaleX(0.9600);">500,</span>
<svg class="r" style="left:2px;top:437px;" width="7" height="9" viewBox="0 0 7 9"><path d="M0.2 0.2 L5.9 4.3 L0.2 8.4 Z" fill="#111"/></svg>
<span class="t" style="left:24.70px;top:433.00px;font-size:13.33px;color:#383838;transform:scaleX(0.9245);">N</span>
<div class="r" style="left:75px;top:429px;width:52px;height:22px;background:#ff851b;"></div>
<div class="r" style="left:130px;top:429px;width:52px;height:22px;background:#ff851b;"></div>
<span class="t" style="left:76.20px;top:433.00px;font-size:13.33px;color:#383838;transform:scaleX(0.8547);">P</span>
<span class="t" style="left:131.20px;top:433.00px;font-size:13.33px;color:#383838;transform:scaleX(0.8547);">P</span>
<span class="t" style="left:185.90px;top:433.00px;font-size:13.33px;color:#383838;transform:scaleX(0.9762);">PR000035</span>
<div class="r" style="left:335px;top:429px;width:72px;height:22px;background:#fff;"></div>
<span class="t" style="left:335.90px;top:433.00px;font-size:13.33px;color:#383838;transform:scaleX(0.8655);">PRO</span>
<span class="t" style="left:410.60px;top:433.00px;font-size:13.33px;color:#383838;transform:scaleX(0.8681);">CASSETTA INOX OPACO 2</span>
<span class="t" style="left:601.40px;top:433.00px;font-size:13.33px;color:#383838;transform:scaleX(1.0079);">V3030-2</span>
<span class="t" style="left:739.20px;top:433.00px;font-size:13.33px;color:#383838;transform:scaleX(0.8398);">CASSETTE</span>
<span class="t" style="left:820.60px;top:433.00px;font-size:13.33px;color:#383838;transform:scaleX(1.0630);">-2</span>
<div class="r" style="left:870px;top:429px;width:42px;height:22px;background:#2ecc40;"></div>
<span class="t" style="left:870.50px;top:433.00px;font-size:13.33px;color:#383838;transform:scaleX(0.9110);">V</span>
<span class="t" style="left:915.60px;top:433.00px;font-size:13.33px;color:#383838;transform:scaleX(0.9600);">100,</span>
<div class="r" style="left:75px;top:462px;width:52px;height:22px;background:#ff851b;"></div>
<div class="r" style="left:130px;top:462px;width:52px;height:22px;background:#ff851b;"></div>
<span class="t" style="left:76.20px;top:466.00px;font-size:13.33px;color:#383838;transform:scaleX(0.8547);">P</span>
<span class="t" style="left:131.20px;top:466.00px;font-size:13.33px;color:#383838;transform:scaleX(0.8547);">P</span>
<span class="t" style="left:185.90px;top:466.00px;font-size:13.33px;color:#383838;transform:scaleX(0.9209);">ORD_CAS_2</span>
<div class="r" style="left:335px;top:462px;width:72px;height:22px;background:#ffdc00;"></div>
<span class="t" style="left:335.90px;top:466.00px;font-size:13.33px;color:#383838;transform:scaleX(0.8715);">REL</span>
<span class="t" style="left:410.60px;top:466.00px;font-size:13.33px;color:#383838;transform:scaleX(0.8681);">CASSETTA INOX OPACO 2</span>
<span class="t" style="left:601.40px;top:466.00px;font-size:13.33px;color:#383838;transform:scaleX(1.0079);">V3030-2</span>
<span class="t" style="left:739.20px;top:466.00px;font-size:13.33px;color:#383838;transform:scaleX(0.8398);">CASSETTE</span>
<span class="t" style="left:820.60px;top:466.00px;font-size:13.33px;color:#383838;transform:scaleX(0.9577);">0</span>
<div class="r" style="left:870px;top:462px;width:42px;height:22px;background:#2ecc40;"></div>
<span class="t" style="left:870.50px;top:466.00px;font-size:13.33px;color:#383838;transform:scaleX(0.9110);">V</span>
<span class="t" style="left:915.60px;top:466.00px;font-size:13.33px;color:#383838;transform:scaleX(0.9600);">100,</span>
</div>
<div class="r" style="left:0px;top:759px;width:940px;height:133px;background:#fff;"></div>
<div class="r" style="left:0px;top:892px;width:940px;height:17px;background:#f1f1f1;"></div>
<div class="r" style="left:13px;top:894px;width:372px;height:13px;background:#c1c1c1;"></div>
<svg class="r" style="left:1px;top:897px;" width="6" height="8" viewBox="0 0 6 8"><path d="M5.2 0.4 V7.4 L0.6 3.9 Z" fill="#555"/></svg>
<svg class="r" style="left:929px;top:897px;" width="6" height="8" viewBox="0 0 6 8"><path d="M0.8 0.4 V7.4 L5.4 3.9 Z" fill="#333"/></svg>
<div class="r" style="left:0px;top:909px;width:940px;height:1px;background:#cccccc;"></div>
<div class="r" style="left:0px;top:910px;width:940px;height:42px;background:#f5f5f5;"></div>
<div class="r" style="left:-1px;top:915px;width:33.5px;height:33px;background:#f9f9f9;border:1px solid #ccc;"></div>
<div class="r" style="left:32px;top:915px;width:33px;height:33px;background:#f9f9f9;border:1px solid #ccc;border-radius:0 3px 3px 0;"></div>
<div class="r" style="left:206px;top:915px;width:33px;height:33px;background:#f9f9f9;border:1px solid #ccc;border-radius:3px 0 0 3px;"></div>
<div class="r" style="left:238px;top:915px;width:33.5px;height:33px;background:#f9f9f9;border:1px solid #ccc;border-radius:0 3px 3px 0;"></div>
<svg class="r" style="left:11px;top:927px;" width="9" height="9" viewBox="0 0 9 9"><rect x="0.6" y="0.6" width="1.4" height="7.6" fill="#aaa"/><path d="M8 0.6 V8.2 L2.6 4.4 Z" fill="#aaa"/></svg>
<svg class="r" style="left:45px;top:927px;" width="7" height="9" viewBox="0 0 7 9"><path d="M6.2 0.6 V8.2 L0.8 4.4 Z" fill="#aaa"/></svg>
<svg class="r" style="left:219px;top:927px;" width="7" height="9" viewBox="0 0 7 9"><path d="M0.8 0.6 V8.2 L6.2 4.4 Z" fill="#aaa"/></svg>
<svg class="r" style="left:250px;top:927px;" width="9" height="9" viewBox="0 0 9 9"><rect x="6.8" y="0.6" width="1.4" height="7.6" fill="#aaa"/><path d="M0.8 0.6 V8.2 L6.2 4.4 Z" fill="#aaa"/></svg>
<span class="t" style="left:78.70px;top:925.00px;font-size:13.33px;color:#999;transform:scaleX(0.9323);">Pagina</span>
<div class="r" style="left:124.5px;top:915px;width:40px;height:33px;background:#fff;border:1px solid #ccc;border-radius:4px;"></div>
<span class="t" style="left:137.70px;top:925.00px;font-size:13.33px;color:#333;">1</span>
<span class="t" style="left:172.20px;top:925.00px;font-size:13.33px;color:#999;transform:scaleX(0.9352);">di 1</span>
<span class="t" style="left:773.10px;top:925.00px;font-size:13.33px;color:#999;transform:scaleX(0.9819);">1 - 15 di 15 elementi</span>
<svg class="r" style="left:913.5px;top:922.5px;" width="16" height="17" viewBox="0 0 16 17"><path d="M12.6 6.4 A5.6 5.6 0 1 1 8 3.6" fill="none" stroke="#428bca" stroke-width="1.8"/><path d="M7.2 0.4 L11.8 3.7 L7.2 7 Z" fill="#428bca"/></svg>
<div class="r" style="left:1895px;top:176px;width:15px;height:776px;background:#fff;"></div>
<div class="r" style="left:1895px;top:944px;width:15px;height:1px;background:#ccc;"></div>
<div class="r" style="left:948px;top:176px;width:947px;height:734px;background:#fff;"></div>
<div class="r" style="left:948px;top:176px;width:929px;height:95px;background:#f5f5f5;"></div>
<div class="r" style="left:1877px;top:176px;width:17px;height:95px;background:#f5f5f5;"></div>
<div class="r" style="left:1077px;top:236px;width:160px;height:34px;background:#c4c4c4;"></div>
<div class="r" style="left:1637px;top:236px;width:160px;height:34px;background:#c4c4c4;"></div>
<div class="r" style="left:948px;top:235px;width:929px;height:1px;background:#cccccc;"></div>
<div class="r" style="left:948px;top:270px;width:946px;height:1px;background:#cccccc;"></div>
<div class="r" style="left:1237px;top:176px;width:1px;height:59px;background:#cccccc;"></div>
<div class="r" style="left:1797px;top:176px;width:1px;height:59px;background:#cccccc;"></div>
<div class="r" style="left:1877px;top:176px;width:1px;height:59px;background:#cccccc;"></div>
<div class="r" style="left:997px;top:236px;width:1px;height:34px;background:#cccccc;"></div>
<div class="r" style="left:1077px;top:236px;width:1px;height:34px;background:#cccccc;"></div>
<div class="r" style="left:1157px;top:236px;width:1px;height:34px;background:#bbb;"></div>
<div class="r" style="left:1237px;top:236px;width:1px;height:34px;background:#cccccc;"></div>
<div class="r" style="left:1317px;top:236px;width:1px;height:34px;background:#cccccc;"></div>
<div class="r" style="left:1397px;top:236px;width:1px;height:34px;background:#cccccc;"></div>
<div class="r" style="left:1477px;top:236px;width:1px;height:34px;background:#cccccc;"></div>
<div class="r" style="left:1557px;top:236px;width:1px;height:34px;background:#cccccc;"></div>
<div class="r" style="left:1637px;top:236px;width:1px;height:34px;background:#bbb;"></div>
<div class="r" style="left:1717px;top:236px;width:1px;height:34px;background:#cccccc;"></div>
<div class="r" style="left:1797px;top:236px;width:1px;height:34px;background:#cccccc;"></div>
<div class="r" style="left:1877px;top:236px;width:1px;height:34px;background:#cccccc;"></div>
<div class="r" style="left:1157px;top:236px;width:1px;height:34px;background:#bdbdbd;"></div>
<div class="r" style="left:1717px;top:236px;width:1px;height:34px;background:#bdbdbd;"></div>
<span class="t" style="left:979.60px;top:211.00px;font-size:14px;color:#383838;transform:scaleX(1.0178);">29/06/2023 - 02/07/2023</span>
<span class="t" style="left:1189.50px;top:211.00px;font-size:14px;color:#383838;transform:scaleX(0.8878);">WK 26</span>
<span class="t" style="left:1419.60px;top:211.00px;font-size:14px;color:#383838;transform:scaleX(1.0198);">03/07/2023 - 09/07/2023</span>
<span class="t" style="left:1749.00px;top:211.00px;font-size:14px;color:#383838;transform:scaleX(0.8949);">WK 27</span>
<div class="r" style="left:1798px;top:200px;width:79px;height:34px;overflow:hidden;">
<span class="t" style="left:11.50px;top:11.00px;font-size:14px;color:#383838;transform:scaleX(1.0161);">10/07/2023</span>
</div>
<span class="t" style="left:949.60px;top:246.00px;font-size:14px;color:#383838;transform:scaleX(0.9138);">o 29</span>
<span class="t" style="left:1017.80px;top:246.00px;font-size:14px;color:#383838;transform:scaleX(0.9230);">ven 30</span>
<span class="t" style="left:1102.10px;top:246.00px;font-size:14px;color:#383838;transform:scaleX(0.8818);">sab 1</span>
<span class="t" style="left:1179.50px;top:246.00px;font-size:14px;color:#383838;transform:scaleX(0.9098);">dom 2</span>
<span class="t" style="left:1262.95px;top:246.00px;font-size:14px;color:#383838;transform:scaleX(0.9388);">lun 3</span>
<span class="t" style="left:1340.45px;top:246.00px;font-size:14px;color:#383838;transform:scaleX(0.9361);">mar 4</span>
<span class="t" style="left:1420.20px;top:246.00px;font-size:14px;color:#383838;transform:scaleX(0.9501);">mer 5</span>
<span class="t" style="left:1502.95px;top:246.00px;font-size:14px;color:#383838;transform:scaleX(0.9388);">gio 6</span>
<span class="t" style="left:1581.45px;top:246.00px;font-size:14px;color:#383838;transform:scaleX(0.9197);">ven 7</span>
<span class="t" style="left:1661.45px;top:246.00px;font-size:14px;color:#383838;transform:scaleX(0.9197);">sab 8</span>
<span class="t" style="left:1738.95px;top:246.00px;font-size:14px;color:#383838;transform:scaleX(0.9380);">dom 9</span>
<span class="t" style="left:1819.20px;top:246.00px;font-size:14px;color:#383838;transform:scaleX(0.9438);">lun 10</span>
<div class="r" style="left:949px;top:271px;width:928px;height:622px;overflow:hidden;background:#fff;">
<div class="r" style="left:0px;top:0px;width:905px;height:32px;background:#fff;"></div>
<div class="r" style="left:106px;top:0px;width:160px;height:32px;background:#fafafa;"></div>
<div class="r" style="left:666px;top:0px;width:160px;height:32px;background:#fafafa;"></div>
<div class="r" style="left:0px;top:32px;width:905px;height:1px;background:#cccccc;"></div>
<div class="r" style="left:0px;top:33px;width:905px;height:31px;background:#f5f5f5;"></div>
<div class="r" style="left:106px;top:33px;width:160px;height:31px;background:#efefef;"></div>
<div class="r" style="left:666px;top:33px;width:160px;height:31px;background:#efefef;"></div>
<div class="r" style="left:0px;top:64px;width:905px;height:1px;background:#cccccc;"></div>
<div class="r" style="left:0px;top:65px;width:905px;height:32px;background:#fff;"></div>
<div class="r" style="left:106px;top:65px;width:160px;height:32px;background:#fafafa;"></div>
<div class="r" style="left:666px;top:65px;width:160px;height:32px;background:#fafafa;"></div>
<div class="r" style="left:0px;top:97px;width:905px;height:1px;background:#cccccc;"></div>
<div class="r" style="left:0px;top:98px;width:905px;height:32px;background:#f5f5f5;"></div>
<div class="r" style="left:106px;top:98px;width:160px;height:32px;background:#efefef;"></div>
<div class="r" style="left:666px;top:98px;width:160px;height:32px;background:#efefef;"></div>
<div class="r" style="left:0px;top:130px;width:905px;height:1px;background:#cccccc;"></div>
<div class="r" style="left:0px;top:131px;width:905px;height:31px;background:#fff;"></div>
<div class="r" style="left:106px;top:131px;width:160px;height:31px;background:#fafafa;"></div>
<div class="r" style="left:666px;top:131px;width:160px;height:31px;background:#fafafa;"></div>
<div class="r" style="left:0px;top:162px;width:905px;height:1px;background:#cccccc;"></div>
<div class="r" style="left:0px;top:163px;width:905px;height:32px;background:#f5f5f5;"></div>
<div class="r" style="left:106px;top:163px;width:160px;height:32px;background:#efefef;"></div>
<div class="r" style="left:666px;top:163px;width:160px;height:32px;background:#efefef;"></div>
<div class="r" style="left:0px;top:195px;width:905px;height:1px;background:#cccccc;"></div>
<div class="r" style="left:0px;top:196px;width:905px;height:32px;background:#fff;"></div>
<div class="r" style="left:106px;top:196px;width:160px;height:32px;background:#fafafa;"></div>
<div class="r" style="left:666px;top:196px;width:160px;height:32px;background:#fafafa;"></div>
<div class="r" style="left:0px;top:228px;width:905px;height:1px;background:#cccccc;"></div>
<div class="r" style="left:0px;top:229px;width:905px;height:31px;background:#f5f5f5;"></div>
<div class="r" style="left:106px;top:229px;width:160px;height:31px;background:#efefef;"></div>
<div class="r" style="left:666px;top:229px;width:160px;height:31px;background:#efefef;"></div>
<div class="r" style="left:0px;top:260px;width:905px;height:1px;background:#cccccc;"></div>
<div class="r" style="left:0px;top:261px;width:905px;height:32px;background:#fff;"></div>
<div class="r" style="left:106px;top:261px;width:160px;height:32px;background:#fafafa;"></div>
<div class="r" style="left:666px;top:261px;width:160px;height:32px;background:#fafafa;"></div>
<div class="r" style="left:0px;top:293px;width:905px;height:1px;background:#cccccc;"></div>
<div class="r" style="left:0px;top:294px;width:905px;height:31px;background:#f5f5f5;"></div>
<div class="r" style="left:106px;top:294px;width:160px;height:31px;background:#efefef;"></div>
<div class="r" style="left:666px;top:294px;width:160px;height:31px;background:#efefef;"></div>
<div class="r" style="left:0px;top:325px;width:905px;height:1px;background:#cccccc;"></div>
<div class="r" style="left:0px;top:326px;width:905px;height:32px;background:#fff;"></div>
<div class="r" style="left:106px;top:326px;width:160px;height:32px;background:#fafafa;"></div>
<div class="r" style="left:666px;top:326px;width:160px;height:32px;background:#fafafa;"></div>
<div class="r" style="left:0px;top:358px;width:905px;height:1px;background:#cccccc;"></div>
<div class="r" style="left:0px;top:359px;width:905px;height:32px;background:#f5f5f5;"></div>
<div class="r" style="left:106px;top:359px;width:160px;height:32px;background:#efefef;"></div>
<div class="r" style="left:666px;top:359px;width:160px;height:32px;background:#efefef;"></div>
<div class="r" style="left:0px;top:391px;width:905px;height:1px;background:#cccccc;"></div>
<div class="r" style="left:0px;top:392px;width:905px;height:31px;background:#fff;"></div>
<div class="r" style="left:106px;top:392px;width:160px;height:31px;background:#fafafa;"></div>
<div class="r" style="left:666px;top:392px;width:160px;height:31px;background:#fafafa;"></div>
<div class="r" style="left:0px;top:423px;width:905px;height:1px;background:#cccccc;"></div>
<div class="r" style="left:0px;top:424px;width:905px;height:32px;background:#f5f5f5;"></div>
<div class="r" style="left:106px;top:424px;width:160px;height:32px;background:#efefef;"></div>
<div class="r" style="left:666px;top:424px;width:160px;height:32px;background:#efefef;"></div>
<div class="r" style="left:0px;top:456px;width:905px;height:1px;background:#cccccc;"></div>
<div class="r" style="left:0px;top:457px;width:905px;height:32px;background:#fff;"></div>
<div class="r" style="left:106px;top:457px;width:160px;height:32px;background:#fafafa;"></div>
<div class="r" style="left:666px;top:457px;width:160px;height:32px;background:#fafafa;"></div>
<div class="r" style="left:0px;top:489px;width:905px;height:1px;background:#cccccc;"></div>
<div class="r" style="left:25px;top:0px;width:1px;height:489px;background:#cccccc;"></div>
<div class="r" style="left:105px;top:0px;width:1px;height:489px;background:#cccccc;"></div>
<div class="r" style="left:185px;top:0px;width:1px;height:489px;background:#cccccc;"></div>
<div class="r" style="left:265px;top:0px;width:1px;height:489px;background:#cccccc;"></div>
<div class="r" style="left:345px;top:0px;width:1px;height:489px;background:#cccccc;"></div>
<div class="r" style="left:425px;top:0px;width:1px;height:489px;background:#cccccc;"></div>
<div class="r" style="left:505px;top:0px;width:1px;height:489px;background:#cccccc;"></div>
<div class="r" style="left:585px;top:0px;width:1px;height:489px;background:#cccccc;"></div>
<div class="r" style="left:665px;top:0px;width:1px;height:489px;background:#cccccc;"></div>
<div class="r" style="left:745px;top:0px;width:1px;height:489px;background:#cccccc;"></div>
<div class="r" style="left:825px;top:0px;width:1px;height:489px;background:#cccccc;"></div>
<svg class="r" style="left:0;top:0" width="928" height="622" viewBox="0 0 928 622"><path d="M63 15.9 H76.20000000000005 V32.3 H58.3 M63 48.9 H76.20000000000005 V64.3 H58.3 M63 80.9 H76.20000000000005 V97.3 H58.3 M63 113.9 H76.20000000000005 V130.3 H58.3 M58.3 32.3 V178.9 H65 M58.3 146.9 H65 M65 146.9 H79.29999999999995 V162.3 H61.1 M65 178.9 H79.29999999999995 V195.3 H61.1 M65 211.9 H79.29999999999995 V228.3 H61.1 M65 244.9 H79.29999999999995 V260.3 H61.1 M61.1 162.3 V309.9 H67 M61.1 276.9 H67 M535 276.9 H549.5 V293.3 H531.1 M535 309.9 H549.5 V325.3 H531.1 M535 341.9 H549.5 V358.3 H531.1 M535 374.9 H549.5 V391.3 H531.1 M535 407.9 H549.5 V423.3 H531.1 M531.1 293.3 V439.9 H537 M637 439.9 H647.0999999999999 V472.7 H821" fill="none" stroke="#333" stroke-width="1.7"/><path d="M62.3 141.8 L67.6 146.9 L62.3 152.0 Z" fill="#333" stroke="none"/><path d="M62.3 173.8 L67.6 178.9 L62.3 184.0 Z" fill="#333" stroke="none"/><path d="M65.1 271.8 L70.4 276.9 L65.1 282.0 Z" fill="#333" stroke="none"/><path d="M65.1 304.8 L70.4 309.9 L65.1 315.0 Z" fill="#333" stroke="none"/><path d="M534.9 434.8 L540.2 439.9 L534.9 445.0 Z" fill="#333" stroke="none"/><path d="M819.5 467.6 L824.8 472.7 L819.5 477.8 Z" fill="#333" stroke="none"/><rect x="558.0999999999999" y="0" width="1.2" height="489" fill="#1414f0"/><path d="M-3 6.0 H56.3 L65.6 18.5 L56.3 31.0 H-3 Z" fill="#0074d9"/><path d="M-3 7.0 H56.3 L65.6 18.5 L56.3 31.0" fill="none" stroke="#a9a5a2" stroke-width="2"/><path d="M-3 38.0 H56.3 L65.6 50.5 L56.3 63.0 H-3 Z" fill="#0074d9"/><path d="M-3 39.0 H56.3 L65.6 50.5 L56.3 63.0" fill="none" stroke="#a9a5a2" stroke-width="2"/><path d="M-3 71.0 H56.3 L65.6 83.5 L56.3 96.0 H-3 Z" fill="#0074d9"/><path d="M-3 72.0 H56.3 L65.6 83.5 L56.3 96.0" fill="none" stroke="#a9a5a2" stroke-width="2"/><path d="M-3 103.0 H56.3 L65.6 115.5 L56.3 128.0 H-3 Z" fill="#0074d9"/><path d="M-3 104.0 H56.3 L65.6 115.5 L56.3 128.0" fill="none" stroke="#a9a5a2" stroke-width="2"/><path d="M-3 201.0 H59.4 L68.7 213.5 L59.4 226.0 H-3 Z" fill="#0074d9"/><path d="M-3 202.0 H59.4 L68.7 213.5 L59.4 226.0" fill="none" stroke="#a9a5a2" stroke-width="2"/><path d="M-3 234.0 H59.4 L68.7 246.5 L59.4 259.0 H-3 Z" fill="#0074d9"/><path d="M-3 235.0 H59.4 L68.7 246.5 L59.4 259.0" fill="none" stroke="#a9a5a2" stroke-width="2"/><path d="M461.8 332.0 H529.3 L538.6 344.5 L529.3 357.0 H461.8 L471.6 344.5 Z" fill="#0074d9"/><path d="M461.8 357.0 L471.6 344.5 L461.8 333.0 H529.3 L538.6 344.5 L529.3 357.0" fill="none" stroke="#a9a5a2" stroke-width="2"/><path d="M461.8 364.0 H529.3 L538.6 376.5 L529.3 389.0 H461.8 L471.6 376.5 Z" fill="#0074d9"/><path d="M461.8 389.0 L471.6 376.5 L461.8 365.0 H529.3 L538.6 376.5 L529.3 389.0" fill="none" stroke="#a9a5a2" stroke-width="2"/><path d="M461.8 397.0 H529.3 L538.6 409.5 L529.3 422.0 H461.8 L471.6 409.5 Z" fill="#0074d9"/><path d="M461.8 422.0 L471.6 409.5 L461.8 398.0 H529.3 L538.6 409.5 L529.3 422.0" fill="none" stroke="#a9a5a2" stroke-width="2"/><rect x="67.4" y="131.3" width="8.6" height="32.7" rx="3.4" fill="#ff851b"/><rect x="67.4" y="164.0" width="8.6" height="32.7" rx="3.4" fill="#ff851b"/><rect x="70.2" y="262.0" width="471.7" height="32.7" rx="3.4" fill="#ff851b"/><rect x="70.2" y="294.7" width="471.7" height="32.1" rx="3.4" fill="#ff851b"/><rect x="540.0" y="425.3" width="99.8" height="32.7" rx="3.4" fill="#ff851b"/><path d="M118.8 8.1 H129.6 L124.2 13.7 Z" fill="#0074d9"/><path d="M118.8 40.8 H129.6 L124.2 46.4 Z" fill="#0074d9"/><path d="M118.8 73.5 H129.6 L124.2 79.1 Z" fill="#0074d9"/><path d="M118.8 106.1 H129.6 L124.2 111.7 Z" fill="#0074d9"/><path d="M118.8 138.8 H129.6 L124.2 144.4 Z" fill="#0074d9"/><path d="M118.8 171.5 H129.6 L124.2 177.1 Z" fill="#0074d9"/><path d="M118.8 204.1 H129.6 L124.2 209.7 Z" fill="#0074d9"/><path d="M118.8 236.8 H129.6 L124.2 242.4 Z" fill="#0074d9"/><path d="M640.9 269.5 H651.7 L646.3 275.1 Z" fill="#0074d9"/><path d="M640.9 302.1 H651.7 L646.3 307.7 Z" fill="#0074d9"/><path d="M640.9 334.8 H651.7 L646.3 340.4 Z" fill="#0074d9"/><path d="M640.9 367.5 H651.7 L646.3 373.1 Z" fill="#0074d9"/><path d="M640.9 400.1 H651.7 L646.3 405.7 Z" fill="#0074d9"/></svg>
<div class="r" style="left:0px;top:488px;width:905px;height:1px;background:#cccccc;"></div>
<div class="r" style="left:0;top:457px;width:905px;height:32px;overflow:hidden;">
<svg class="r" style="left:825.4000000000001px;top:3.7999999999999545px;" width="12" height="16" viewBox="0 0 12 16"><path d="M5.7 0.3 A5.2 5.2 0 0 1 10.9 5.5 Q10.9 7.8 5.7 15.2 Q0.5 7.8 0.5 5.5 A5.2 5.2 0 0 1 5.7 0.3 Z M5.7 3 A2.5 2.5 0 1 0 5.7 8 A2.5 2.5 0 1 0 5.7 3 Z" fill="#ffdc00" fill-rule="evenodd"/></svg>
<span class="t" style="left:842.70px;top:4.00px;font-size:14px;color:#ffdc00;font-weight:bold;transform:scaleX(0.8390);">ORD_CAS_2</span>
</div>
<svg class="r" style="left:0;top:0" width="928" height="622" viewBox="0 0 928 622"><path d="M901.9 432.3 H912.7 L907.3 437.9 Z" fill="#0074d9"/><path d="M901.9 465.1 H912.7 L907.3 470.7 Z" fill="#0074d9"/></svg>
</div>
<div class="r" style="left:1877px;top:271px;width:17px;height:623px;background:#f1f1f1;"></div>
<svg class="r" style="left:1881px;top:277.3px;" width="9" height="6" viewBox="0 0 9 6"><path d="M0.6 5.2 H8.2 L4.4 0.8 Z" fill="#a3a3a3"/></svg>
<svg class="r" style="left:1881px;top:882.5px;" width="9" height="6" viewBox="0 0 9 6"><path d="M0.6 0.6 H8.2 L4.4 5 Z" fill="#a3a3a3"/></svg>
<div class="r" style="left:949px;top:894px;width:928px;height:17px;background:#f1f1f1;"></div>
<div class="r" style="left:1016px;top:896px;width:844px;height:12.6px;background:#c1c1c1;"></div>
<svg class="r" style="left:954.5px;top:899px;" width="6" height="8" viewBox="0 0 6 8"><path d="M4.8 0.4 V7.4 L0.6 3.9 Z" fill="#555"/></svg>
<svg class="r" style="left:1866.5px;top:899px;" width="6" height="8" viewBox="0 0 6 8"><path d="M0.8 0.4 V7.4 L5 3.9 Z" fill="#666"/></svg>
<div class="r" style="left:1877px;top:894px;width:17px;height:17px;background:#dcdcdc;"></div>
<div class="r" style="left:948px;top:176px;width:1px;height:776px;background:#cccccc;"></div>
<div class="r" style="left:1894px;top:176px;width:1px;height:727px;background:#c4c4c4;"></div>
<div class="r" style="left:949px;top:911px;width:946px;height:41px;background:#f5f5f5;"></div>
<svg class="r" style="left:1597px;top:928.5px;" width="16" height="15" viewBox="0 0 16 15"><circle cx="5.8" cy="5.8" r="4.4" fill="none" stroke="#aaa" stroke-width="1.5"/><path d="M9 9 L14 13.8" stroke="#aaa" stroke-width="2.2" stroke-linecap="round"/></svg>
<span class="t" style="left:1616.00px;top:927.00px;font-size:15px;color:#a2a2a2;transform:scaleX(0.8330);">ZOOM: 80 %</span>
<div class="r" style="left:1692px;top:914px;width:24px;height:24px;background:#fff;border:1px solid #ccc;border-radius:50%;"></div>
<div class="r" style="left:1867.8px;top:914px;width:24px;height:24px;background:#fff;border:1px solid #ccc;border-radius:50%;"></div>
<svg class="r" style="left:1699px;top:922px;" width="9" height="9" viewBox="0 0 9 9"><path d="M6.8 0.6 V8 L1 4.3 Z" fill="#111"/></svg>
<svg class="r" style="left:1875.5px;top:922px;" width="9" height="9" viewBox="0 0 9 9"><path d="M1.6 0.6 V8 L7.4 4.3 Z" fill="#111"/></svg>
<div class="r" style="left:1736px;top:922px;width:122px;height:10px;background:#fff;border:1px solid #ccc;border-radius:1px;"></div>
<div class="r" style="left:1724.0px;top:918.6999999999999px;width:16.4px;height:16.4px;background:#fff;border:1px solid #ccc;border-radius:50%;"></div>
</body></html>
